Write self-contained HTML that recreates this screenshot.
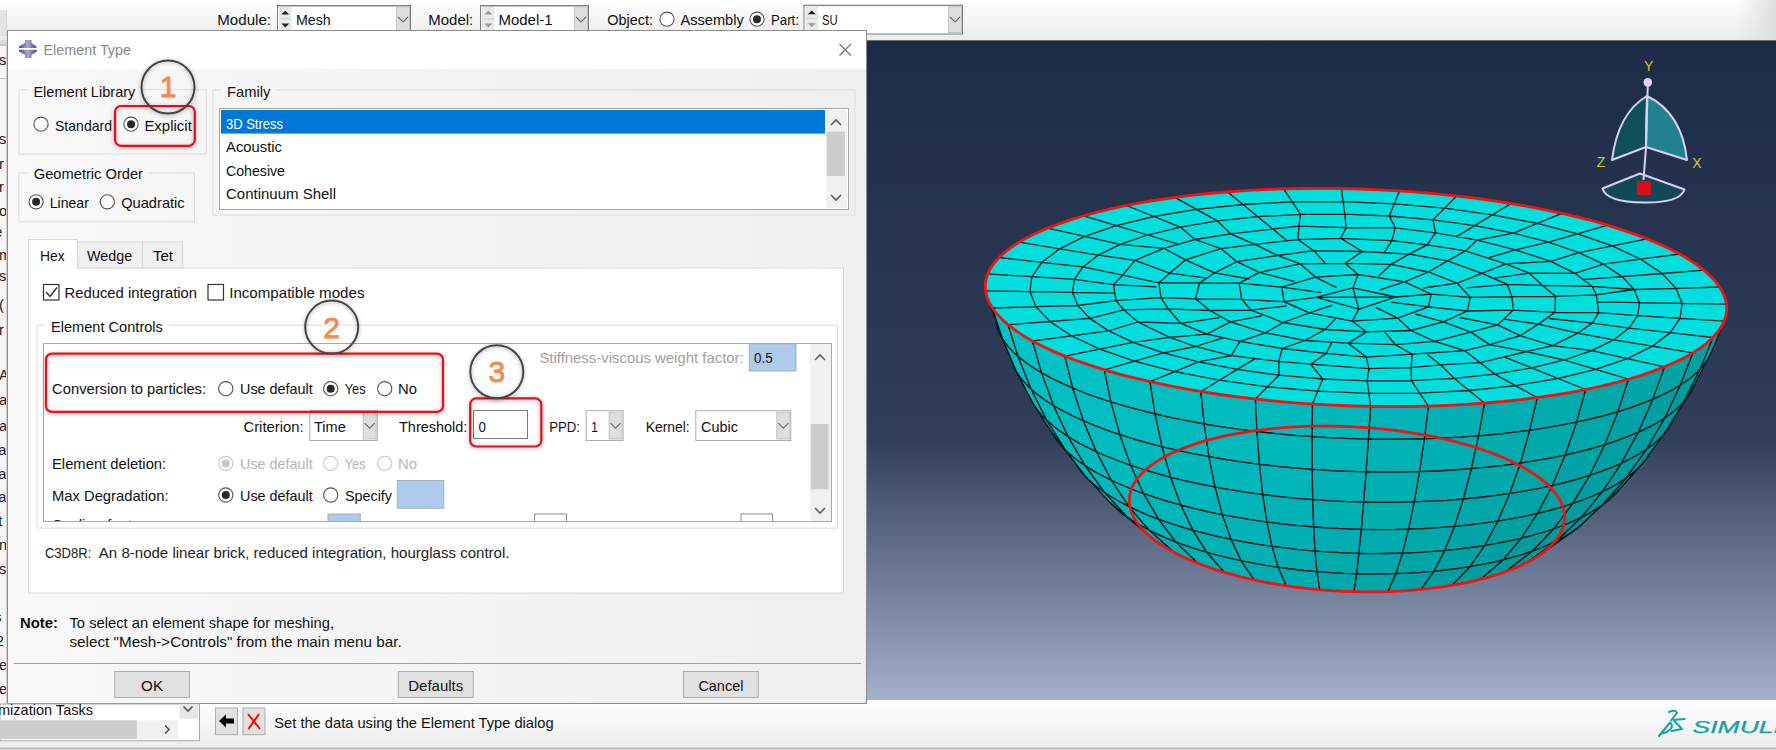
<!DOCTYPE html><html><head><meta charset="utf-8"><style>html,body{margin:0;padding:0;overflow:hidden;background:#f0f0f0}svg{display:block}text{font-family:"Liberation Sans",sans-serif}</style></head><body>
<svg width="1776" height="750" viewBox="0 0 1776 750">
<defs>
<linearGradient id="vp" x1="0" y1="0" x2="0" y2="1">
<stop offset="0" stop-color="#1d2c46"/><stop offset="0.6" stop-color="#303e59"/><stop offset="1" stop-color="#a4b0c9"/></linearGradient>
<linearGradient id="tb" x1="0" y1="0" x2="0" y2="1"><stop offset="0" stop-color="#ffffff"/><stop offset="1" stop-color="#ebebeb"/></linearGradient>
<linearGradient id="sb" x1="0" y1="0" x2="0" y2="1"><stop offset="0" stop-color="#ffffff"/><stop offset="1" stop-color="#ececec"/></linearGradient>
<linearGradient id="dlg" x1="0" y1="0" x2="1" y2="0"><stop offset="0" stop-color="#f8f8f8"/><stop offset="1" stop-color="#efefef"/></linearGradient>
<filter id="sh" x="-20%" y="-20%" width="140%" height="140%"><feGaussianBlur in="SourceAlpha" stdDeviation="2"/><feOffset dx="0" dy="1"/><feComponentTransfer><feFuncA type="linear" slope="0.35"/></feComponentTransfer><feMerge><feMergeNode/><feMergeNode in="SourceGraphic"/></feMerge></filter>
</defs>
<rect x="0" y="0" width="1776" height="40" fill="url(#tb)" stroke="none" stroke-width="1" rx="0" />
<linearGradient id="tbr" x1="0" y1="0" x2="1" y2="0"><stop offset="0" stop-color="#e4e4e4" stop-opacity="0"/><stop offset="1" stop-color="#dcdcdc"/></linearGradient>
<rect x="1735" y="0" width="41" height="40" fill="url(#tbr)" stroke="none" stroke-width="1" rx="0" />
<rect x="0" y="10" width="6.5" height="26" fill="#e4e4e4" stroke="none" stroke-width="1" rx="0" />
<line x1="6.5" y1="10" x2="6.5" y2="36" stroke="#d4d4d4" stroke-width="1"/>
<rect x="0" y="40" width="1776" height="660" fill="url(#vp)" stroke="none" stroke-width="1" rx="0" />
<line x1="0" y1="40.5" x2="1776" y2="40.5" stroke="#6a6a6a" stroke-width="1"/>
<rect x="0" y="700" width="1776" height="50" fill="url(#sb)" stroke="none" stroke-width="1" rx="0" />
<line x1="0" y1="748.5" x2="1776" y2="748.5" stroke="#b8b8b8" stroke-width="2"/>
<text x="217.3" y="25.4" font-size="15.0" fill="#111" font-weight="normal" textLength="53.7" lengthAdjust="spacingAndGlyphs" >Module:</text>
<rect x="277.5" y="5.5" width="133" height="34" fill="#fff" stroke="#7a7a7a" stroke-width="1" rx="0" />
<line x1="277" y1="6" x2="411" y2="6" stroke="#8a8a8a" stroke-width="1"/>
<rect x="396.5" y="7" width="13" height="31" fill="#dedede" stroke="#c4c4c4" stroke-width="1" rx="0" />
<path d="M398.0,17.0 L403.0,22.0 L408.0,17.0" fill="none" stroke="#6a6a6a" stroke-width="1.2"/>
<rect x="279" y="7" width="12.5" height="32" fill="#e9e9e9" stroke="none" stroke-width="1" rx="0" />
<path d="M281.3,14.6 L285.3,10.8 L289.3,14.6 Z" fill="#222"/>
<path d="M281.3,23.6 L285.3,27.4 L289.3,23.6 Z" fill="#222"/>
<line x1="280" y1="18.8" x2="291" y2="18.8" stroke="#cfcfcf" stroke-width="1"/>
<text x="296" y="25.4" font-size="15.0" fill="#111" font-weight="normal" textLength="34.7" lengthAdjust="spacingAndGlyphs" >Mesh</text>
<text x="428.3" y="25.4" font-size="15.0" fill="#111" font-weight="normal" textLength="44.9" lengthAdjust="spacingAndGlyphs" >Model:</text>
<rect x="480.5" y="5.5" width="108" height="34" fill="#fff" stroke="#7a7a7a" stroke-width="1" rx="0" />
<line x1="480" y1="6" x2="589" y2="6" stroke="#8a8a8a" stroke-width="1"/>
<rect x="574.5" y="7" width="13" height="31" fill="#dedede" stroke="#c4c4c4" stroke-width="1" rx="0" />
<path d="M576.0,17.0 L581.0,22.0 L586.0,17.0" fill="none" stroke="#6a6a6a" stroke-width="1.2"/>
<rect x="482" y="7" width="12.5" height="32" fill="#e9e9e9" stroke="none" stroke-width="1" rx="0" />
<path d="M484.3,14.6 L488.3,10.8 L492.3,14.6 Z" fill="#999"/>
<path d="M484.3,23.6 L488.3,27.4 L492.3,23.6 Z" fill="#999"/>
<line x1="483" y1="18.8" x2="494" y2="18.8" stroke="#cfcfcf" stroke-width="1"/>
<text x="498.6" y="25.4" font-size="15.0" fill="#111" font-weight="normal" textLength="53.9" lengthAdjust="spacingAndGlyphs" >Model-1</text>
<text x="607.2" y="25.4" font-size="15.0" fill="#111" font-weight="normal" textLength="45.8" lengthAdjust="spacingAndGlyphs" >Object:</text>
<circle cx="667" cy="19.2" r="7.1" fill="#fff" stroke="#555" stroke-width="1.1"/>
<text x="680.5" y="25.4" font-size="15.0" fill="#111" font-weight="normal" textLength="63.2" lengthAdjust="spacingAndGlyphs" >Assembly</text>
<circle cx="757" cy="19.2" r="7.1" fill="#fff" stroke="#555" stroke-width="1.1"/>
<circle cx="757" cy="19.2" r="4.0" fill="#2a2a2a"/>
<text x="771" y="25.4" font-size="15.0" fill="#111" font-weight="normal" textLength="27.9" lengthAdjust="spacingAndGlyphs" >Part:</text>
<rect x="804.0" y="5.2" width="158.5" height="28.8" fill="#fff" stroke="#7a7a7a" stroke-width="1" rx="0" />
<line x1="803.5" y1="5.7" x2="963" y2="5.7" stroke="#8a8a8a" stroke-width="1"/>
<rect x="948.5" y="6.7" width="13" height="25.8" fill="#dedede" stroke="#c4c4c4" stroke-width="1" rx="0" />
<path d="M950.0,17.0 L955.0,22.0 L960.0,17.0" fill="none" stroke="#6a6a6a" stroke-width="1.2"/>
<rect x="805.5" y="6.7" width="12.5" height="26.8" fill="#e9e9e9" stroke="none" stroke-width="1" rx="0" />
<path d="M807.8,14.3 L811.8,10.5 L815.8,14.3 Z" fill="#222"/>
<path d="M807.8,23.3 L811.8,27.099999999999998 L815.8,23.3 Z" fill="#999"/>
<line x1="806.5" y1="18.5" x2="817.5" y2="18.5" stroke="#cfcfcf" stroke-width="1"/>
<text x="822" y="25.4" font-size="15.0" fill="#111" font-weight="normal" textLength="15.7" lengthAdjust="spacingAndGlyphs" >SU</text>
<path d="M985.5,290.8 L985.2,285.1 L986.0,279.5 L987.7,273.9 L998.5,305.1 L996.8,310.8 L996.0,316.5 L996.3,322.2 Z" fill="rgb(0,191,193)" stroke="#021c1e" stroke-width="1.3" stroke-linejoin="round"/>
<path d="M996.3,322.2 L996.0,316.5 L996.8,310.8 L998.5,305.1 L1012.7,338.0 L1011.0,343.6 L1010.3,349.3 L1010.5,355.0 Z" fill="rgb(0,188,191)" stroke="#021c1e" stroke-width="1.3" stroke-linejoin="round"/>
<path d="M1010.5,355.0 L1010.3,349.3 L1011.0,343.6 L1012.7,338.0 L1029.7,370.0 L1028.1,375.6 L1027.3,381.2 L1027.5,386.9 Z" fill="rgb(0,186,188)" stroke="#021c1e" stroke-width="1.3" stroke-linejoin="round"/>
<path d="M1027.5,386.9 L1027.3,381.2 L1028.1,375.6 L1029.7,370.0 L1049.5,401.2 L1047.9,406.6 L1047.3,412.0 L1047.4,417.5 Z" fill="rgb(0,183,186)" stroke="#021c1e" stroke-width="1.3" stroke-linejoin="round"/>
<path d="M1047.4,417.5 L1047.3,412.0 L1047.9,406.6 L1049.5,401.2 L1072.2,431.2 L1070.8,436.4 L1070.1,441.5 L1070.2,446.8 Z" fill="rgb(0,181,183)" stroke="#021c1e" stroke-width="1.3" stroke-linejoin="round"/>
<path d="M1070.2,446.8 L1070.1,441.5 L1070.8,436.4 L1072.2,431.2 L1098.2,460.1 L1096.9,464.9 L1096.3,469.7 L1096.4,474.6 Z" fill="rgb(0,179,181)" stroke="#021c1e" stroke-width="1.3" stroke-linejoin="round"/>
<path d="M1096.4,474.6 L1096.3,469.7 L1096.9,464.9 L1098.2,460.1 L1130.9,490.3 L1129.8,494.5 L1129.3,498.8 L1129.3,503.1 Z" fill="rgb(0,177,179)" stroke="#021c1e" stroke-width="1.3" stroke-linejoin="round"/>
<path d="M1726.5,304.2 L1726.8,309.9 L1726.0,315.5 L1724.3,321.1 L1710.8,353.2 L1712.5,347.5 L1713.3,341.8 L1713.0,336.1 Z" fill="rgb(0,156,158)" stroke="#021c1e" stroke-width="1.3" stroke-linejoin="round"/>
<path d="M1713.0,336.1 L1713.3,341.8 L1712.5,347.5 L1710.8,353.2 L1693.8,386.3 L1695.5,380.7 L1696.2,375.0 L1696.0,369.2 Z" fill="rgb(0,153,155)" stroke="#021c1e" stroke-width="1.3" stroke-linejoin="round"/>
<path d="M1696.0,369.2 L1696.2,375.0 L1695.5,380.7 L1693.8,386.3 L1674.1,418.0 L1675.7,412.4 L1676.5,406.8 L1676.3,401.2 Z" fill="rgb(0,151,153)" stroke="#021c1e" stroke-width="1.3" stroke-linejoin="round"/>
<path d="M1676.3,401.2 L1676.5,406.8 L1675.7,412.4 L1674.1,418.0 L1651.7,448.0 L1653.2,442.6 L1653.9,437.2 L1653.8,431.7 Z" fill="rgb(0,149,150)" stroke="#021c1e" stroke-width="1.3" stroke-linejoin="round"/>
<path d="M1653.8,431.7 L1653.9,437.2 L1653.2,442.6 L1651.7,448.0 L1626.5,476.0 L1627.9,470.9 L1628.6,465.7 L1628.5,460.5 Z" fill="rgb(0,146,148)" stroke="#021c1e" stroke-width="1.3" stroke-linejoin="round"/>
<path d="M1628.5,460.5 L1628.6,465.7 L1627.9,470.9 L1626.5,476.0 L1598.2,501.9 L1599.5,497.2 L1600.1,492.4 L1600.0,487.5 Z" fill="rgb(0,144,146)" stroke="#021c1e" stroke-width="1.3" stroke-linejoin="round"/>
<path d="M1600.0,487.5 L1600.1,492.4 L1599.5,497.2 L1598.2,501.9 L1563.1,527.7 L1564.2,523.5 L1564.7,519.2 L1564.7,514.9 Z" fill="rgb(0,142,144)" stroke="#021c1e" stroke-width="1.3" stroke-linejoin="round"/>
<path d="M992.3,308.0 L989.0,302.3 L986.7,296.5 L985.5,290.8 L996.3,322.2 L997.5,328.0 L999.7,333.8 L1002.8,339.5 Z" fill="rgb(0,192,194)" stroke="#021c1e" stroke-width="1.3" stroke-linejoin="round"/>
<path d="M1002.8,339.5 L999.7,333.8 L997.5,328.0 L996.3,322.2 L1010.5,355.0 L1011.6,360.8 L1013.7,366.6 L1016.7,372.3 Z" fill="rgb(0,190,192)" stroke="#021c1e" stroke-width="1.3" stroke-linejoin="round"/>
<path d="M1016.7,372.3 L1013.7,366.6 L1011.6,360.8 L1010.5,355.0 L1027.5,386.9 L1028.6,392.5 L1030.5,398.2 L1033.3,403.9 Z" fill="rgb(0,187,189)" stroke="#021c1e" stroke-width="1.3" stroke-linejoin="round"/>
<path d="M1033.3,403.9 L1030.5,398.2 L1028.6,392.5 L1027.5,386.9 L1047.4,417.5 L1048.4,423.0 L1050.2,428.5 L1052.8,434.0 Z" fill="rgb(0,185,187)" stroke="#021c1e" stroke-width="1.3" stroke-linejoin="round"/>
<path d="M1052.8,434.0 L1050.2,428.5 L1048.4,423.0 L1047.4,417.5 L1070.2,446.8 L1071.1,452.0 L1072.7,457.2 L1075.1,462.4 Z" fill="rgb(0,182,185)" stroke="#021c1e" stroke-width="1.3" stroke-linejoin="round"/>
<path d="M1075.1,462.4 L1072.7,457.2 L1071.1,452.0 L1070.2,446.8 L1096.4,474.6 L1097.2,479.4 L1098.6,484.3 L1100.8,489.2 Z" fill="rgb(0,180,182)" stroke="#021c1e" stroke-width="1.3" stroke-linejoin="round"/>
<path d="M1100.8,489.2 L1098.6,484.3 L1097.2,479.4 L1096.4,474.6 L1129.3,503.1 L1130.0,507.5 L1131.3,511.8 L1133.1,516.2 Z" fill="rgb(0,178,180)" stroke="#021c1e" stroke-width="1.3" stroke-linejoin="round"/>
<path d="M1724.3,321.1 L1721.5,326.7 L1717.7,332.1 L1712.9,337.5 L1699.8,369.7 L1704.4,364.3 L1708.1,358.8 L1710.8,353.2 Z" fill="rgb(0,158,160)" stroke="#021c1e" stroke-width="1.3" stroke-linejoin="round"/>
<path d="M1710.8,353.2 L1708.1,358.8 L1704.4,364.3 L1699.8,369.7 L1683.2,402.8 L1687.6,397.4 L1691.2,391.9 L1693.8,386.3 Z" fill="rgb(0,155,157)" stroke="#021c1e" stroke-width="1.3" stroke-linejoin="round"/>
<path d="M1693.8,386.3 L1691.2,391.9 L1687.6,397.4 L1683.2,402.8 L1664.0,434.2 L1668.3,428.9 L1671.6,423.5 L1674.1,418.0 Z" fill="rgb(0,153,155)" stroke="#021c1e" stroke-width="1.3" stroke-linejoin="round"/>
<path d="M1674.1,418.0 L1671.6,423.5 L1668.3,428.9 L1664.0,434.2 L1642.2,463.7 L1646.2,458.6 L1649.4,453.3 L1651.7,448.0 Z" fill="rgb(0,150,152)" stroke="#021c1e" stroke-width="1.3" stroke-linejoin="round"/>
<path d="M1651.7,448.0 L1649.4,453.3 L1646.2,458.6 L1642.2,463.7 L1617.8,491.0 L1621.4,486.0 L1624.4,481.1 L1626.5,476.0 Z" fill="rgb(0,148,150)" stroke="#021c1e" stroke-width="1.3" stroke-linejoin="round"/>
<path d="M1626.5,476.0 L1624.4,481.1 L1621.4,486.0 L1617.8,491.0 L1590.2,515.9 L1593.6,511.3 L1596.2,506.7 L1598.2,501.9 Z" fill="rgb(0,146,148)" stroke="#021c1e" stroke-width="1.3" stroke-linejoin="round"/>
<path d="M1598.2,501.9 L1596.2,506.7 L1593.6,511.3 L1590.2,515.9 L1556.1,540.1 L1559.0,536.1 L1561.3,531.9 L1563.1,527.7 Z" fill="rgb(0,144,145)" stroke="#021c1e" stroke-width="1.3" stroke-linejoin="round"/>
<path d="M1008.1,324.8 L1001.9,319.3 L996.6,313.6 L992.3,308.0 L1002.8,339.5 L1007.0,345.2 L1012.0,350.9 L1018.1,356.5 Z" fill="rgb(0,193,195)" stroke="#021c1e" stroke-width="1.3" stroke-linejoin="round"/>
<path d="M1018.1,356.5 L1012.0,350.9 L1007.0,345.2 L1002.8,339.5 L1016.7,372.3 L1020.6,378.0 L1025.5,383.7 L1031.2,389.3 Z" fill="rgb(0,190,193)" stroke="#021c1e" stroke-width="1.3" stroke-linejoin="round"/>
<path d="M1031.2,389.3 L1025.5,383.7 L1020.6,378.0 L1016.7,372.3 L1033.3,403.9 L1037.0,409.5 L1041.6,415.1 L1047.0,420.6 Z" fill="rgb(0,188,190)" stroke="#021c1e" stroke-width="1.3" stroke-linejoin="round"/>
<path d="M1047.0,420.6 L1041.6,415.1 L1037.0,409.5 L1033.3,403.9 L1052.8,434.0 L1056.2,439.5 L1060.5,444.9 L1065.5,450.2 Z" fill="rgb(0,185,188)" stroke="#021c1e" stroke-width="1.3" stroke-linejoin="round"/>
<path d="M1065.5,450.2 L1060.5,444.9 L1056.2,439.5 L1052.8,434.0 L1075.1,462.4 L1078.3,467.6 L1082.2,472.8 L1086.8,477.9 Z" fill="rgb(0,183,185)" stroke="#021c1e" stroke-width="1.3" stroke-linejoin="round"/>
<path d="M1086.8,477.9 L1082.2,472.8 L1078.3,467.6 L1075.1,462.4 L1100.8,489.2 L1103.6,494.0 L1107.1,498.8 L1111.3,503.6 Z" fill="rgb(0,181,183)" stroke="#021c1e" stroke-width="1.3" stroke-linejoin="round"/>
<path d="M1111.3,503.6 L1107.1,498.8 L1103.6,494.0 L1100.8,489.2 L1133.1,516.2 L1135.5,520.5 L1138.5,524.7 L1142.1,529.0 Z" fill="rgb(0,179,181)" stroke="#021c1e" stroke-width="1.3" stroke-linejoin="round"/>
<path d="M1712.9,337.5 L1707.2,342.8 L1700.4,347.9 L1692.8,352.9 L1680.2,385.2 L1687.7,380.2 L1694.2,375.0 L1699.8,369.7 Z" fill="rgb(0,160,162)" stroke="#021c1e" stroke-width="1.3" stroke-linejoin="round"/>
<path d="M1699.8,369.7 L1694.2,375.0 L1687.7,380.2 L1680.2,385.2 L1664.5,418.3 L1671.6,413.3 L1677.8,408.1 L1683.2,402.8 Z" fill="rgb(0,157,159)" stroke="#021c1e" stroke-width="1.3" stroke-linejoin="round"/>
<path d="M1683.2,402.8 L1677.8,408.1 L1671.6,413.3 L1664.5,418.3 L1646.3,449.5 L1653.0,444.5 L1658.9,439.4 L1664.0,434.2 Z" fill="rgb(0,155,157)" stroke="#021c1e" stroke-width="1.3" stroke-linejoin="round"/>
<path d="M1664.0,434.2 L1658.9,439.4 L1653.0,444.5 L1646.3,449.5 L1625.6,478.5 L1631.9,473.7 L1637.5,468.8 L1642.2,463.7 Z" fill="rgb(0,152,154)" stroke="#021c1e" stroke-width="1.3" stroke-linejoin="round"/>
<path d="M1642.2,463.7 L1637.5,468.8 L1631.9,473.7 L1625.6,478.5 L1602.4,505.0 L1608.2,500.4 L1613.3,495.8 L1617.8,491.0 Z" fill="rgb(0,150,152)" stroke="#021c1e" stroke-width="1.3" stroke-linejoin="round"/>
<path d="M1617.8,491.0 L1613.3,495.8 L1608.2,500.4 L1602.4,505.0 L1576.3,528.9 L1581.6,524.7 L1586.2,520.3 L1590.2,515.9 Z" fill="rgb(0,148,150)" stroke="#021c1e" stroke-width="1.3" stroke-linejoin="round"/>
<path d="M1590.2,515.9 L1586.2,520.3 L1581.6,524.7 L1576.3,528.9 L1544.1,551.8 L1548.6,548.0 L1552.7,544.1 L1556.1,540.1 Z" fill="rgb(0,146,148)" stroke="#021c1e" stroke-width="1.3" stroke-linejoin="round"/>
<path d="M1032.5,341.0 L1023.4,335.7 L1015.3,330.3 L1008.1,324.8 L1018.1,356.5 L1025.0,362.1 L1032.9,367.5 L1041.6,372.9 Z" fill="rgb(0,193,196)" stroke="#021c1e" stroke-width="1.3" stroke-linejoin="round"/>
<path d="M1041.6,372.9 L1032.9,367.5 L1025.0,362.1 L1018.1,356.5 L1031.2,389.3 L1037.8,394.9 L1045.3,400.3 L1053.7,405.7 Z" fill="rgb(0,191,193)" stroke="#021c1e" stroke-width="1.3" stroke-linejoin="round"/>
<path d="M1053.7,405.7 L1045.3,400.3 L1037.8,394.9 L1031.2,389.3 L1047.0,420.6 L1053.3,426.1 L1060.3,431.4 L1068.2,436.7 Z" fill="rgb(0,188,191)" stroke="#021c1e" stroke-width="1.3" stroke-linejoin="round"/>
<path d="M1068.2,436.7 L1060.3,431.4 L1053.3,426.1 L1047.0,420.6 L1065.5,450.2 L1071.3,455.5 L1077.9,460.8 L1085.3,465.9 Z" fill="rgb(0,186,188)" stroke="#021c1e" stroke-width="1.3" stroke-linejoin="round"/>
<path d="M1085.3,465.9 L1077.9,460.8 L1071.3,455.5 L1065.5,450.2 L1086.8,477.9 L1092.2,483.0 L1098.2,487.9 L1105.0,492.8 Z" fill="rgb(0,184,186)" stroke="#021c1e" stroke-width="1.3" stroke-linejoin="round"/>
<path d="M1105.0,492.8 L1098.2,487.9 L1092.2,483.0 L1086.8,477.9 L1111.3,503.6 L1116.1,508.2 L1121.5,512.9 L1127.6,517.4 Z" fill="rgb(0,181,184)" stroke="#021c1e" stroke-width="1.3" stroke-linejoin="round"/>
<path d="M1127.6,517.4 L1121.5,512.9 L1116.1,508.2 L1111.3,503.6 L1142.1,529.0 L1146.3,533.2 L1151.0,537.3 L1156.2,541.3 Z" fill="rgb(0,179,181)" stroke="#021c1e" stroke-width="1.3" stroke-linejoin="round"/>
<path d="M1692.8,352.9 L1684.2,357.7 L1674.7,362.4 L1664.4,366.9 L1652.7,399.4 L1662.7,394.8 L1671.9,390.1 L1680.2,385.2 Z" fill="rgb(0,162,164)" stroke="#021c1e" stroke-width="1.3" stroke-linejoin="round"/>
<path d="M1680.2,385.2 L1671.9,390.1 L1662.7,394.8 L1652.7,399.4 L1638.1,432.4 L1647.7,427.9 L1656.5,423.2 L1664.5,418.3 Z" fill="rgb(0,160,162)" stroke="#021c1e" stroke-width="1.3" stroke-linejoin="round"/>
<path d="M1664.5,418.3 L1656.5,423.2 L1647.7,427.9 L1638.1,432.4 L1621.2,463.3 L1630.3,458.9 L1638.7,454.3 L1646.3,449.5 Z" fill="rgb(0,157,159)" stroke="#021c1e" stroke-width="1.3" stroke-linejoin="round"/>
<path d="M1646.3,449.5 L1638.7,454.3 L1630.3,458.9 L1621.2,463.3 L1602.1,491.9 L1610.7,487.6 L1618.5,483.1 L1625.6,478.5 Z" fill="rgb(0,155,157)" stroke="#021c1e" stroke-width="1.3" stroke-linejoin="round"/>
<path d="M1625.6,478.5 L1618.5,483.1 L1610.7,487.6 L1602.1,491.9 L1580.7,517.8 L1588.6,513.7 L1595.8,509.4 L1602.4,505.0 Z" fill="rgb(0,153,155)" stroke="#021c1e" stroke-width="1.3" stroke-linejoin="round"/>
<path d="M1602.4,505.0 L1595.8,509.4 L1588.6,513.7 L1580.7,517.8 L1556.8,540.8 L1563.9,537.0 L1570.4,533.0 L1576.3,528.9 Z" fill="rgb(0,150,152)" stroke="#021c1e" stroke-width="1.3" stroke-linejoin="round"/>
<path d="M1576.3,528.9 L1570.4,533.0 L1563.9,537.0 L1556.8,540.8 L1527.1,562.3 L1533.3,558.9 L1539.0,555.4 L1544.1,551.8 Z" fill="rgb(0,148,150)" stroke="#021c1e" stroke-width="1.3" stroke-linejoin="round"/>
<path d="M1064.8,356.1 L1053.2,351.2 L1042.4,346.2 L1032.5,341.0 L1041.6,372.9 L1051.2,378.1 L1061.6,383.2 L1072.8,388.2 Z" fill="rgb(0,193,196)" stroke="#021c1e" stroke-width="1.3" stroke-linejoin="round"/>
<path d="M1072.8,388.2 L1061.6,383.2 L1051.2,378.1 L1041.6,372.9 L1053.7,405.7 L1062.8,410.9 L1072.8,416.0 L1083.5,420.9 Z" fill="rgb(0,191,193)" stroke="#021c1e" stroke-width="1.3" stroke-linejoin="round"/>
<path d="M1083.5,420.9 L1072.8,416.0 L1062.8,410.9 L1053.7,405.7 L1068.2,436.7 L1076.8,441.9 L1086.2,446.9 L1096.4,451.8 Z" fill="rgb(0,188,191)" stroke="#021c1e" stroke-width="1.3" stroke-linejoin="round"/>
<path d="M1096.4,451.8 L1086.2,446.9 L1076.8,441.9 L1068.2,436.7 L1085.3,465.9 L1093.3,470.9 L1102.1,475.7 L1111.6,480.5 Z" fill="rgb(0,186,188)" stroke="#021c1e" stroke-width="1.3" stroke-linejoin="round"/>
<path d="M1111.6,480.5 L1102.1,475.7 L1093.3,470.9 L1085.3,465.9 L1105.0,492.8 L1112.4,497.5 L1120.4,502.2 L1129.1,506.7 Z" fill="rgb(0,183,186)" stroke="#021c1e" stroke-width="1.3" stroke-linejoin="round"/>
<path d="M1129.1,506.7 L1120.4,502.2 L1112.4,497.5 L1105.0,492.8 L1127.6,517.4 L1134.2,521.8 L1141.5,526.1 L1149.3,530.3 Z" fill="rgb(0,181,184)" stroke="#021c1e" stroke-width="1.3" stroke-linejoin="round"/>
<path d="M1149.3,530.3 L1141.5,526.1 L1134.2,521.8 L1127.6,517.4 L1156.2,541.3 L1162.0,545.3 L1168.2,549.1 L1175.0,552.9 Z" fill="rgb(0,179,181)" stroke="#021c1e" stroke-width="1.3" stroke-linejoin="round"/>
<path d="M1664.4,366.9 L1653.2,371.2 L1641.1,375.3 L1628.3,379.2 L1617.8,411.8 L1630.2,407.9 L1641.8,403.7 L1652.7,399.4 Z" fill="rgb(0,165,167)" stroke="#021c1e" stroke-width="1.3" stroke-linejoin="round"/>
<path d="M1652.7,399.4 L1641.8,403.7 L1630.2,407.9 L1617.8,411.8 L1604.7,444.8 L1616.5,440.9 L1627.7,436.7 L1638.1,432.4 Z" fill="rgb(0,163,165)" stroke="#021c1e" stroke-width="1.3" stroke-linejoin="round"/>
<path d="M1638.1,432.4 L1627.7,436.7 L1616.5,440.9 L1604.7,444.8 L1589.6,475.5 L1600.8,471.7 L1611.4,467.6 L1621.2,463.3 Z" fill="rgb(0,160,162)" stroke="#021c1e" stroke-width="1.3" stroke-linejoin="round"/>
<path d="M1621.2,463.3 L1611.4,467.6 L1600.8,471.7 L1589.6,475.5 L1572.5,503.7 L1583.0,500.0 L1592.9,496.0 L1602.1,491.9 Z" fill="rgb(0,158,160)" stroke="#021c1e" stroke-width="1.3" stroke-linejoin="round"/>
<path d="M1602.1,491.9 L1592.9,496.0 L1583.0,500.0 L1572.5,503.7 L1553.4,529.0 L1563.1,525.5 L1572.2,521.7 L1580.7,517.8 Z" fill="rgb(0,155,157)" stroke="#021c1e" stroke-width="1.3" stroke-linejoin="round"/>
<path d="M1580.7,517.8 L1572.2,521.7 L1563.1,525.5 L1553.4,529.0 L1532.1,551.2 L1540.9,547.9 L1549.1,544.5 L1556.8,540.8 Z" fill="rgb(0,153,155)" stroke="#021c1e" stroke-width="1.3" stroke-linejoin="round"/>
<path d="M1556.8,540.8 L1549.1,544.5 L1540.9,547.9 L1532.1,551.2 L1505.8,571.6 L1513.4,568.7 L1520.5,565.6 L1527.1,562.3 Z" fill="rgb(0,151,153)" stroke="#021c1e" stroke-width="1.3" stroke-linejoin="round"/>
<path d="M1104.3,369.8 L1090.4,365.4 L1077.2,360.9 L1064.8,356.1 L1072.8,388.2 L1084.8,393.0 L1097.5,397.6 L1111.0,402.0 Z" fill="rgb(0,193,195)" stroke="#021c1e" stroke-width="1.3" stroke-linejoin="round"/>
<path d="M1111.0,402.0 L1097.5,397.6 L1084.8,393.0 L1072.8,388.2 L1083.5,420.9 L1094.9,425.7 L1107.1,430.3 L1119.9,434.7 Z" fill="rgb(0,190,193)" stroke="#021c1e" stroke-width="1.3" stroke-linejoin="round"/>
<path d="M1119.9,434.7 L1107.1,430.3 L1094.9,425.7 L1083.5,420.9 L1096.4,451.8 L1107.2,456.5 L1118.7,461.0 L1130.8,465.4 Z" fill="rgb(0,188,190)" stroke="#021c1e" stroke-width="1.3" stroke-linejoin="round"/>
<path d="M1130.8,465.4 L1118.7,461.0 L1107.2,456.5 L1096.4,451.8 L1111.6,480.5 L1121.7,485.0 L1132.4,489.5 L1143.7,493.7 Z" fill="rgb(0,185,188)" stroke="#021c1e" stroke-width="1.3" stroke-linejoin="round"/>
<path d="M1143.7,493.7 L1132.4,489.5 L1121.7,485.0 L1111.6,480.5 L1129.1,506.7 L1138.4,511.1 L1148.3,515.3 L1158.7,519.3 Z" fill="rgb(0,183,185)" stroke="#021c1e" stroke-width="1.3" stroke-linejoin="round"/>
<path d="M1158.7,519.3 L1148.3,515.3 L1138.4,511.1 L1129.1,506.7 L1149.3,530.3 L1157.7,534.4 L1166.6,538.3 L1176.0,542.1 Z" fill="rgb(0,181,183)" stroke="#021c1e" stroke-width="1.3" stroke-linejoin="round"/>
<path d="M1176.0,542.1 L1166.6,538.3 L1157.7,534.4 L1149.3,530.3 L1175.0,552.9 L1182.2,556.5 L1189.9,560.0 L1198.0,563.3 Z" fill="rgb(0,178,181)" stroke="#021c1e" stroke-width="1.3" stroke-linejoin="round"/>
<path d="M1628.3,379.2 L1614.8,382.9 L1600.5,386.3 L1585.6,389.5 L1576.5,422.2 L1590.9,419.0 L1604.7,415.5 L1617.8,411.8 Z" fill="rgb(0,168,170)" stroke="#021c1e" stroke-width="1.3" stroke-linejoin="round"/>
<path d="M1617.8,411.8 L1604.7,415.5 L1590.9,419.0 L1576.5,422.2 L1565.1,455.1 L1578.9,451.9 L1592.1,448.5 L1604.7,444.8 Z" fill="rgb(0,166,168)" stroke="#021c1e" stroke-width="1.3" stroke-linejoin="round"/>
<path d="M1604.7,444.8 L1592.1,448.5 L1578.9,451.9 L1565.1,455.1 L1552.1,485.7 L1565.2,482.5 L1577.7,479.1 L1589.6,475.5 Z" fill="rgb(0,163,165)" stroke="#021c1e" stroke-width="1.3" stroke-linejoin="round"/>
<path d="M1589.6,475.5 L1577.7,479.1 L1565.2,482.5 L1552.1,485.7 L1537.4,513.5 L1549.7,510.5 L1561.4,507.2 L1572.5,503.7 Z" fill="rgb(0,161,163)" stroke="#021c1e" stroke-width="1.3" stroke-linejoin="round"/>
<path d="M1572.5,503.7 L1561.4,507.2 L1549.7,510.5 L1537.4,513.5 L1521.1,538.3 L1532.4,535.4 L1543.2,532.3 L1553.4,529.0 Z" fill="rgb(0,158,160)" stroke="#021c1e" stroke-width="1.3" stroke-linejoin="round"/>
<path d="M1553.4,529.0 L1543.2,532.3 L1532.4,535.4 L1521.1,538.3 L1502.9,559.9 L1513.1,557.2 L1522.8,554.3 L1532.1,551.2 Z" fill="rgb(0,156,158)" stroke="#021c1e" stroke-width="1.3" stroke-linejoin="round"/>
<path d="M1532.1,551.2 L1522.8,554.3 L1513.1,557.2 L1502.9,559.9 L1480.5,579.3 L1489.3,576.9 L1497.8,574.4 L1505.8,571.6 Z" fill="rgb(0,154,156)" stroke="#021c1e" stroke-width="1.3" stroke-linejoin="round"/>
<path d="M1150.0,381.7 L1134.2,378.0 L1118.9,374.0 L1104.3,369.8 L1111.0,402.0 L1125.1,406.2 L1139.8,410.2 L1155.1,414.0 Z" fill="rgb(0,192,194)" stroke="#021c1e" stroke-width="1.3" stroke-linejoin="round"/>
<path d="M1155.1,414.0 L1139.8,410.2 L1125.1,406.2 L1111.0,402.0 L1119.9,434.7 L1133.4,439.0 L1147.5,443.0 L1162.1,446.8 Z" fill="rgb(0,189,191)" stroke="#021c1e" stroke-width="1.3" stroke-linejoin="round"/>
<path d="M1162.1,446.8 L1147.5,443.0 L1133.4,439.0 L1119.9,434.7 L1130.8,465.4 L1143.6,469.6 L1156.9,473.5 L1170.7,477.3 Z" fill="rgb(0,187,189)" stroke="#021c1e" stroke-width="1.3" stroke-linejoin="round"/>
<path d="M1170.7,477.3 L1156.9,473.5 L1143.6,469.6 L1130.8,465.4 L1143.7,493.7 L1155.6,497.7 L1168.0,501.6 L1181.0,505.2 Z" fill="rgb(0,184,186)" stroke="#021c1e" stroke-width="1.3" stroke-linejoin="round"/>
<path d="M1181.0,505.2 L1168.0,501.6 L1155.6,497.7 L1143.7,493.7 L1158.7,519.3 L1169.6,523.2 L1181.1,526.8 L1193.0,530.3 Z" fill="rgb(0,182,184)" stroke="#021c1e" stroke-width="1.3" stroke-linejoin="round"/>
<path d="M1193.0,530.3 L1181.1,526.8 L1169.6,523.2 L1158.7,519.3 L1176.0,542.1 L1185.8,545.7 L1196.1,549.1 L1206.9,552.3 Z" fill="rgb(0,180,182)" stroke="#021c1e" stroke-width="1.3" stroke-linejoin="round"/>
<path d="M1206.9,552.3 L1196.1,549.1 L1185.8,545.7 L1176.0,542.1 L1198.0,563.3 L1206.5,566.5 L1215.4,569.6 L1224.6,572.5 Z" fill="rgb(0,177,180)" stroke="#021c1e" stroke-width="1.3" stroke-linejoin="round"/>
<path d="M1585.6,389.5 L1570.1,392.5 L1553.9,395.2 L1537.2,397.6 L1529.6,430.3 L1545.8,427.8 L1561.4,425.1 L1576.5,422.2 Z" fill="rgb(0,171,173)" stroke="#021c1e" stroke-width="1.3" stroke-linejoin="round"/>
<path d="M1576.5,422.2 L1561.4,425.1 L1545.8,427.8 L1529.6,430.3 L1520.3,463.2 L1535.7,460.7 L1550.7,458.1 L1565.1,455.1 Z" fill="rgb(0,169,171)" stroke="#021c1e" stroke-width="1.3" stroke-linejoin="round"/>
<path d="M1565.1,455.1 L1550.7,458.1 L1535.7,460.7 L1520.3,463.2 L1509.6,493.6 L1524.3,491.2 L1538.4,488.6 L1552.1,485.7 Z" fill="rgb(0,166,168)" stroke="#021c1e" stroke-width="1.3" stroke-linejoin="round"/>
<path d="M1552.1,485.7 L1538.4,488.6 L1524.3,491.2 L1509.6,493.6 L1497.7,521.2 L1511.4,518.9 L1524.6,516.3 L1537.4,513.5 Z" fill="rgb(0,164,166)" stroke="#021c1e" stroke-width="1.3" stroke-linejoin="round"/>
<path d="M1537.4,513.5 L1524.6,516.3 L1511.4,518.9 L1497.7,521.2 L1484.5,545.6 L1497.1,543.4 L1509.3,541.0 L1521.1,538.3 Z" fill="rgb(0,161,163)" stroke="#021c1e" stroke-width="1.3" stroke-linejoin="round"/>
<path d="M1521.1,538.3 L1509.3,541.0 L1497.1,543.4 L1484.5,545.6 L1469.9,566.7 L1481.3,564.6 L1492.3,562.4 L1502.9,559.9 Z" fill="rgb(0,159,161)" stroke="#021c1e" stroke-width="1.3" stroke-linejoin="round"/>
<path d="M1502.9,559.9 L1492.3,562.4 L1481.3,564.6 L1469.9,566.7 L1452.0,585.3 L1461.8,583.5 L1471.3,581.5 L1480.5,579.3 Z" fill="rgb(0,157,159)" stroke="#021c1e" stroke-width="1.3" stroke-linejoin="round"/>
<path d="M1200.8,391.5 L1183.4,388.5 L1166.4,385.2 L1150.0,381.7 L1155.1,414.0 L1171.0,417.6 L1187.4,420.9 L1204.2,424.0 Z" fill="rgb(0,190,192)" stroke="#021c1e" stroke-width="1.3" stroke-linejoin="round"/>
<path d="M1204.2,424.0 L1187.4,420.9 L1171.0,417.6 L1155.1,414.0 L1162.1,446.8 L1177.3,450.3 L1192.9,453.7 L1209.0,456.7 Z" fill="rgb(0,188,190)" stroke="#021c1e" stroke-width="1.3" stroke-linejoin="round"/>
<path d="M1209.0,456.7 L1192.9,453.7 L1177.3,450.3 L1162.1,446.8 L1170.7,477.3 L1185.1,480.8 L1199.9,484.0 L1215.1,487.1 Z" fill="rgb(0,185,187)" stroke="#021c1e" stroke-width="1.3" stroke-linejoin="round"/>
<path d="M1215.1,487.1 L1199.9,484.0 L1185.1,480.8 L1170.7,477.3 L1181.0,505.2 L1194.4,508.6 L1208.2,511.8 L1222.4,514.8 Z" fill="rgb(0,183,185)" stroke="#021c1e" stroke-width="1.3" stroke-linejoin="round"/>
<path d="M1222.4,514.8 L1208.2,511.8 L1194.4,508.6 L1181.0,505.2 L1193.0,530.3 L1205.3,533.5 L1218.0,536.6 L1231.1,539.4 Z" fill="rgb(0,180,183)" stroke="#021c1e" stroke-width="1.3" stroke-linejoin="round"/>
<path d="M1231.1,539.4 L1218.0,536.6 L1205.3,533.5 L1193.0,530.3 L1206.9,552.3 L1218.0,555.3 L1229.4,558.2 L1241.2,560.8 Z" fill="rgb(0,178,180)" stroke="#021c1e" stroke-width="1.3" stroke-linejoin="round"/>
<path d="M1241.2,560.8 L1229.4,558.2 L1218.0,555.3 L1206.9,552.3 L1224.6,572.5 L1234.2,575.2 L1244.1,577.7 L1254.3,580.0 Z" fill="rgb(0,176,178)" stroke="#021c1e" stroke-width="1.3" stroke-linejoin="round"/>
<path d="M1537.2,397.6 L1520.1,399.7 L1502.4,401.6 L1484.4,403.1 L1478.5,435.9 L1495.9,434.3 L1513.0,432.4 L1529.6,430.3 Z" fill="rgb(0,174,177)" stroke="#021c1e" stroke-width="1.3" stroke-linejoin="round"/>
<path d="M1529.6,430.3 L1513.0,432.4 L1495.9,434.3 L1478.5,435.9 L1471.3,468.7 L1488.0,467.2 L1504.3,465.3 L1520.3,463.2 Z" fill="rgb(0,172,174)" stroke="#021c1e" stroke-width="1.3" stroke-linejoin="round"/>
<path d="M1520.3,463.2 L1504.3,465.3 L1488.0,467.2 L1471.3,468.7 L1463.3,499.0 L1479.1,497.5 L1494.6,495.7 L1509.6,493.6 Z" fill="rgb(0,169,171)" stroke="#021c1e" stroke-width="1.3" stroke-linejoin="round"/>
<path d="M1509.6,493.6 L1494.6,495.7 L1479.1,497.5 L1463.3,499.0 L1454.4,526.4 L1469.2,525.0 L1483.6,523.2 L1497.7,521.2 Z" fill="rgb(0,167,169)" stroke="#021c1e" stroke-width="1.3" stroke-linejoin="round"/>
<path d="M1497.7,521.2 L1483.6,523.2 L1469.2,525.0 L1454.4,526.4 L1444.6,550.6 L1458.2,549.2 L1471.5,547.5 L1484.5,545.6 Z" fill="rgb(0,165,167)" stroke="#021c1e" stroke-width="1.3" stroke-linejoin="round"/>
<path d="M1484.5,545.6 L1471.5,547.5 L1458.2,549.2 L1444.6,550.6 L1433.9,571.3 L1446.2,570.0 L1458.2,568.5 L1469.9,566.7 Z" fill="rgb(0,162,164)" stroke="#021c1e" stroke-width="1.3" stroke-linejoin="round"/>
<path d="M1469.9,566.7 L1458.2,568.5 L1446.2,570.0 L1433.9,571.3 L1420.8,589.5 L1431.4,588.3 L1441.8,586.9 L1452.0,585.3 Z" fill="rgb(0,160,162)" stroke="#021c1e" stroke-width="1.3" stroke-linejoin="round"/>
<path d="M1255.4,399.0 L1236.9,396.8 L1218.6,394.3 L1200.8,391.5 L1204.2,424.0 L1221.5,426.8 L1239.1,429.3 L1257.0,431.6 Z" fill="rgb(0,188,191)" stroke="#021c1e" stroke-width="1.3" stroke-linejoin="round"/>
<path d="M1257.0,431.6 L1239.1,429.3 L1221.5,426.8 L1204.2,424.0 L1209.0,456.7 L1225.5,459.5 L1242.4,462.1 L1259.5,464.3 Z" fill="rgb(0,186,188)" stroke="#021c1e" stroke-width="1.3" stroke-linejoin="round"/>
<path d="M1259.5,464.3 L1242.4,462.1 L1225.5,459.5 L1209.0,456.7 L1215.1,487.1 L1230.7,489.8 L1246.6,492.4 L1262.8,494.6 Z" fill="rgb(0,183,185)" stroke="#021c1e" stroke-width="1.3" stroke-linejoin="round"/>
<path d="M1262.8,494.6 L1246.6,492.4 L1230.7,489.8 L1215.1,487.1 L1222.4,514.8 L1237.0,517.4 L1251.9,519.9 L1267.0,522.1 Z" fill="rgb(0,181,183)" stroke="#021c1e" stroke-width="1.3" stroke-linejoin="round"/>
<path d="M1267.0,522.1 L1251.9,519.9 L1237.0,517.4 L1222.4,514.8 L1231.1,539.4 L1244.5,542.0 L1258.2,544.3 L1272.1,546.4 Z" fill="rgb(0,178,181)" stroke="#021c1e" stroke-width="1.3" stroke-linejoin="round"/>
<path d="M1272.1,546.4 L1258.2,544.3 L1244.5,542.0 L1231.1,539.4 L1241.2,560.8 L1253.3,563.2 L1265.7,565.4 L1278.2,567.3 Z" fill="rgb(0,176,178)" stroke="#021c1e" stroke-width="1.3" stroke-linejoin="round"/>
<path d="M1278.2,567.3 L1265.7,565.4 L1253.3,563.2 L1241.2,560.8 L1254.3,580.0 L1264.8,582.2 L1275.4,584.1 L1286.3,585.8 Z" fill="rgb(0,174,176)" stroke="#021c1e" stroke-width="1.3" stroke-linejoin="round"/>
<path d="M1484.4,403.1 L1466.0,404.4 L1447.3,405.4 L1428.4,406.1 L1424.3,438.8 L1442.6,438.1 L1460.7,437.2 L1478.5,435.9 Z" fill="rgb(0,177,180)" stroke="#021c1e" stroke-width="1.3" stroke-linejoin="round"/>
<path d="M1478.5,435.9 L1460.7,437.2 L1442.6,438.1 L1424.3,438.8 L1419.5,471.7 L1437.0,471.0 L1454.3,470.0 L1471.3,468.7 Z" fill="rgb(0,175,177)" stroke="#021c1e" stroke-width="1.3" stroke-linejoin="round"/>
<path d="M1471.3,468.7 L1454.3,470.0 L1437.0,471.0 L1419.5,471.7 L1414.2,501.9 L1430.8,501.2 L1447.2,500.3 L1463.3,499.0 Z" fill="rgb(0,172,175)" stroke="#021c1e" stroke-width="1.3" stroke-linejoin="round"/>
<path d="M1463.3,499.0 L1447.2,500.3 L1430.8,501.2 L1414.2,501.9 L1408.5,529.2 L1424.0,528.6 L1439.3,527.6 L1454.4,526.4 Z" fill="rgb(0,170,172)" stroke="#021c1e" stroke-width="1.3" stroke-linejoin="round"/>
<path d="M1454.4,526.4 L1439.3,527.6 L1424.0,528.6 L1408.5,529.2 L1402.4,553.2 L1416.7,552.6 L1430.8,551.7 L1444.6,550.6 Z" fill="rgb(0,168,170)" stroke="#021c1e" stroke-width="1.3" stroke-linejoin="round"/>
<path d="M1444.6,550.6 L1430.8,551.7 L1416.7,552.6 L1402.4,553.2 L1395.8,573.7 L1408.6,573.2 L1421.4,572.4 L1433.9,571.3 Z" fill="rgb(0,165,168)" stroke="#021c1e" stroke-width="1.3" stroke-linejoin="round"/>
<path d="M1433.9,571.3 L1421.4,572.4 L1408.6,573.2 L1395.8,573.7 L1387.9,591.6 L1399.0,591.1 L1410.0,590.4 L1420.8,589.5 Z" fill="rgb(0,163,165)" stroke="#021c1e" stroke-width="1.3" stroke-linejoin="round"/>
<path d="M1312.5,404.0 L1293.3,402.7 L1274.2,401.0 L1255.4,399.0 L1257.0,431.6 L1275.2,433.6 L1293.6,435.3 L1312.2,436.7 Z" fill="rgb(0,186,188)" stroke="#021c1e" stroke-width="1.3" stroke-linejoin="round"/>
<path d="M1312.2,436.7 L1293.6,435.3 L1275.2,433.6 L1257.0,431.6 L1259.5,464.3 L1276.9,466.3 L1294.5,468.0 L1312.3,469.4 Z" fill="rgb(0,183,186)" stroke="#021c1e" stroke-width="1.3" stroke-linejoin="round"/>
<path d="M1312.3,469.4 L1294.5,468.0 L1276.9,466.3 L1259.5,464.3 L1262.8,494.6 L1279.3,496.6 L1295.9,498.3 L1312.7,499.6 Z" fill="rgb(0,181,183)" stroke="#021c1e" stroke-width="1.3" stroke-linejoin="round"/>
<path d="M1312.7,499.6 L1295.9,498.3 L1279.3,496.6 L1262.8,494.6 L1267.0,522.1 L1282.4,524.0 L1298.0,525.6 L1313.7,527.0 Z" fill="rgb(0,178,181)" stroke="#021c1e" stroke-width="1.3" stroke-linejoin="round"/>
<path d="M1313.7,527.0 L1298.0,525.6 L1282.4,524.0 L1267.0,522.1 L1272.1,546.4 L1286.3,548.2 L1300.6,549.8 L1315.1,551.1 Z" fill="rgb(0,176,178)" stroke="#021c1e" stroke-width="1.3" stroke-linejoin="round"/>
<path d="M1315.1,551.1 L1300.6,549.8 L1286.3,548.2 L1272.1,546.4 L1278.2,567.3 L1291.0,569.0 L1303.9,570.5 L1317.0,571.7 Z" fill="rgb(0,174,176)" stroke="#021c1e" stroke-width="1.3" stroke-linejoin="round"/>
<path d="M1317.0,571.7 L1303.9,570.5 L1291.0,569.0 L1278.2,567.3 L1286.3,585.8 L1297.3,587.4 L1308.5,588.7 L1319.8,589.8 Z" fill="rgb(0,172,174)" stroke="#021c1e" stroke-width="1.3" stroke-linejoin="round"/>
<path d="M1428.4,406.1 L1409.3,406.5 L1390.0,406.6 L1370.6,406.4 L1368.4,439.1 L1387.2,439.3 L1405.8,439.2 L1424.3,438.8 Z" fill="rgb(0,180,183)" stroke="#021c1e" stroke-width="1.3" stroke-linejoin="round"/>
<path d="M1424.3,438.8 L1405.8,439.2 L1387.2,439.3 L1368.4,439.1 L1366.0,471.9 L1384.0,472.1 L1401.8,472.0 L1419.5,471.7 Z" fill="rgb(0,178,180)" stroke="#021c1e" stroke-width="1.3" stroke-linejoin="round"/>
<path d="M1419.5,471.7 L1401.8,472.0 L1384.0,472.1 L1366.0,471.9 L1363.6,502.1 L1380.6,502.3 L1397.5,502.3 L1414.2,501.9 Z" fill="rgb(0,175,178)" stroke="#021c1e" stroke-width="1.3" stroke-linejoin="round"/>
<path d="M1414.2,501.9 L1397.5,502.3 L1380.6,502.3 L1363.6,502.1 L1361.2,529.4 L1377.1,529.6 L1392.9,529.6 L1408.5,529.2 Z" fill="rgb(0,173,175)" stroke="#021c1e" stroke-width="1.3" stroke-linejoin="round"/>
<path d="M1408.5,529.2 L1392.9,529.6 L1377.1,529.6 L1361.2,529.4 L1358.8,553.4 L1373.4,553.6 L1388.0,553.5 L1402.4,553.2 Z" fill="rgb(0,171,173)" stroke="#021c1e" stroke-width="1.3" stroke-linejoin="round"/>
<path d="M1402.4,553.2 L1388.0,553.5 L1373.4,553.6 L1358.8,553.4 L1356.5,573.8 L1369.6,574.1 L1382.7,574.0 L1395.8,573.7 Z" fill="rgb(0,168,171)" stroke="#021c1e" stroke-width="1.3" stroke-linejoin="round"/>
<path d="M1395.8,573.7 L1382.7,574.0 L1369.6,574.1 L1356.5,573.8 L1353.9,591.7 L1365.3,591.9 L1376.6,591.8 L1387.9,591.6 Z" fill="rgb(0,166,168)" stroke="#021c1e" stroke-width="1.3" stroke-linejoin="round"/>
<path d="M1370.6,406.4 L1351.2,405.9 L1331.8,405.1 L1312.5,404.0 L1312.2,436.7 L1330.9,437.8 L1349.7,438.6 L1368.4,439.1 Z" fill="rgb(0,183,186)" stroke="#021c1e" stroke-width="1.3" stroke-linejoin="round"/>
<path d="M1368.4,439.1 L1349.7,438.6 L1330.9,437.8 L1312.2,436.7 L1312.3,469.4 L1330.1,470.6 L1348.1,471.4 L1366.0,471.9 Z" fill="rgb(0,181,183)" stroke="#021c1e" stroke-width="1.3" stroke-linejoin="round"/>
<path d="M1366.0,471.9 L1348.1,471.4 L1330.1,470.6 L1312.3,469.4 L1312.7,499.6 L1329.7,500.8 L1346.6,501.6 L1363.6,502.1 Z" fill="rgb(0,178,181)" stroke="#021c1e" stroke-width="1.3" stroke-linejoin="round"/>
<path d="M1363.6,502.1 L1346.6,501.6 L1329.7,500.8 L1312.7,499.6 L1313.7,527.0 L1329.5,528.1 L1345.3,528.9 L1361.2,529.4 Z" fill="rgb(0,176,178)" stroke="#021c1e" stroke-width="1.3" stroke-linejoin="round"/>
<path d="M1361.2,529.4 L1345.3,528.9 L1329.5,528.1 L1313.7,527.0 L1315.1,551.1 L1329.6,552.1 L1344.2,552.9 L1358.8,553.4 Z" fill="rgb(0,173,176)" stroke="#021c1e" stroke-width="1.3" stroke-linejoin="round"/>
<path d="M1358.8,553.4 L1344.2,552.9 L1329.6,552.1 L1315.1,551.1 L1317.0,571.7 L1330.1,572.7 L1343.3,573.4 L1356.5,573.8 Z" fill="rgb(0,171,173)" stroke="#021c1e" stroke-width="1.3" stroke-linejoin="round"/>
<path d="M1356.5,573.8 L1343.3,573.4 L1330.1,572.7 L1317.0,571.7 L1319.8,589.8 L1331.1,590.6 L1342.5,591.3 L1353.9,591.7 Z" fill="rgb(0,169,171)" stroke="#021c1e" stroke-width="1.3" stroke-linejoin="round"/>
<path d="M1726.8,309.5 L1726.1,315.1 L1724.4,320.7 L1721.7,326.3 L1718.0,331.8 L1713.3,337.1 L1707.6,342.4 L1700.9,347.6 L1693.3,352.6 L1684.8,357.4 L1675.4,362.1 L1665.1,366.6 L1653.9,370.9 L1642.0,375.1 L1629.2,379.0 L1615.7,382.7 L1601.5,386.1 L1586.6,389.3 L1571.1,392.3 L1555.0,395.0 L1538.4,397.4 L1521.2,399.6 L1503.6,401.5 L1485.6,403.0 L1467.3,404.4 L1448.6,405.4 L1429.7,406.1 L1410.5,406.5 L1391.3,406.6 L1371.9,406.4 L1352.5,406.0 L1333.1,405.2 L1313.8,404.1 L1294.5,402.8 L1275.5,401.1 L1256.6,399.2 L1238.1,397.0 L1219.8,394.5 L1202.0,391.7 L1184.5,388.7 L1167.6,385.4 L1151.1,381.9 L1135.2,378.2 L1119.9,374.3 L1105.3,370.1 L1091.3,365.7 L1078.1,361.2 L1065.6,356.4 L1054.0,351.6 L1043.1,346.5 L1033.1,341.4 L1024.0,336.1 L1015.8,330.7 L1008.6,325.2 L1002.3,319.6 L996.9,314.0 L992.6,308.3 L989.2,302.6 L986.9,296.9 L985.5,291.2 L985.2,285.5 L985.9,279.9 L987.6,274.3 L990.3,268.7 L994.0,263.2 L998.7,257.9 L1004.4,252.6 L1011.1,247.4 L1018.7,242.4 L1027.2,237.6 L1036.6,232.9 L1046.9,228.4 L1058.1,224.1 L1070.0,219.9 L1082.8,216.0 L1096.3,212.3 L1110.5,208.9 L1125.4,205.7 L1140.9,202.7 L1157.0,200.0 L1173.6,197.6 L1190.8,195.4 L1208.4,193.5 L1226.4,192.0 L1244.7,190.6 L1263.4,189.6 L1282.3,188.9 L1301.5,188.5 L1320.7,188.4 L1340.1,188.6 L1359.5,189.0 L1378.9,189.8 L1398.2,190.9 L1417.5,192.2 L1436.5,193.9 L1455.4,195.8 L1473.9,198.0 L1492.2,200.5 L1510.0,203.3 L1527.5,206.3 L1544.4,209.6 L1560.9,213.1 L1576.8,216.8 L1592.1,220.7 L1606.7,224.9 L1620.7,229.3 L1633.9,233.8 L1646.4,238.6 L1658.0,243.4 L1668.9,248.5 L1678.9,253.6 L1688.0,258.9 L1696.2,264.3 L1703.4,269.8 L1709.7,275.4 L1715.1,281.0 L1719.4,286.7 L1722.8,292.4 L1725.1,298.1 L1726.5,303.8 Z" fill="#00dede"/>
<path d="M1368.9,393.3 L1317.7,391.2 L1267.5,386.8 L1219.4,380.2 L1174.7,371.6 L1134.5,361.1 L1099.8,349.1 L1071.3,335.8 L1049.9,321.5 L1036.0,306.7 L1029.9,291.6 L1031.9,276.7 L1041.9,262.3 L1059.6,248.8 L1084.6,236.4 L1116.3,225.6 L1153.9,216.5 L1196.5,209.4 L1243.0,204.5 L1292.3,201.9 L1343.1,201.7 L1394.3,203.8 L1444.5,208.2 L1492.6,214.8 L1537.3,223.4 L1577.5,233.9 L1612.2,245.9 L1640.7,259.2 L1662.1,273.5 L1676.0,288.3 L1682.1,303.4 L1680.1,318.3 L1670.1,332.7 L1652.4,346.2 L1627.4,358.6 L1595.7,369.4 L1558.1,378.5 L1515.5,385.6 L1469.0,390.5 L1419.7,393.1 Z M1367.2,380.8 L1322.7,379.0 L1279.0,375.2 L1237.3,369.4 L1198.4,361.9 L1163.5,352.8 L1133.2,342.4 L1108.5,330.8 L1089.9,318.4 L1077.8,305.5 L1072.5,292.4 L1074.3,279.4 L1083.0,266.9 L1098.4,255.1 L1120.1,244.4 L1147.7,235.0 L1180.3,227.1 L1217.3,220.9 L1257.8,216.7 L1300.6,214.4 L1344.8,214.2 L1389.3,216.0 L1433.0,219.8 L1474.7,225.6 L1513.6,233.1 L1548.5,242.2 L1578.8,252.6 L1603.5,264.2 L1622.1,276.6 L1634.2,289.5 L1639.5,302.6 L1637.7,315.6 L1629.0,328.1 L1613.6,339.9 L1591.9,350.6 L1564.3,360.0 L1531.7,367.9 L1494.7,374.1 L1454.2,378.3 L1411.4,380.6 Z M1368.9,368.7 L1310.6,364.2 L1278.7,361.4 L1231.2,355.7 L1195.3,346.5 L1169.7,337.3 L1138.0,322.0 L1123.9,309.9 L1116.0,300.7 L1113.5,284.6 L1122.6,275.2 L1135.1,260.4 L1163.8,248.3 L1195.1,239.5 L1230.7,233.8 L1272.8,229.0 L1298.9,226.2 L1346.2,227.6 L1395.3,227.8 L1435.6,232.9 L1477.2,240.1 L1515.4,249.8 L1550.9,261.4 L1574.9,273.3 L1592.2,286.3 L1596.3,294.8 L1598.7,312.6 L1592.2,323.2 L1577.8,333.1 L1552.6,345.6 L1526.3,351.7 L1480.3,362.7 L1440.6,364.9 L1411.1,367.6 Z M1366.3,357.1 L1326.1,353.4 L1282.2,348.5 L1240.0,341.3 L1206.8,334.1 L1180.9,323.4 L1168.1,308.8 L1161.0,297.7 L1158.9,282.8 L1169.6,273.2 L1185.5,259.9 L1220.9,248.6 L1254.9,244.3 L1298.0,239.6 L1340.8,238.3 L1391.8,240.6 L1427.1,244.8 L1465.4,250.9 L1505.8,263.8 L1529.4,273.2 L1542.5,285.4 L1555.5,296.4 L1554.9,312.4 L1538.4,324.1 L1520.2,335.7 L1489.7,344.6 L1464.8,350.7 L1412.3,354.2 Z M1348.2,343.2 L1304.9,340.5 L1265.4,332.8 L1230.3,321.9 L1209.9,310.5 L1195.4,298.8 L1199.6,282.9 L1214.6,272.8 L1236.9,261.7 L1277.7,255.5 L1313.9,250.7 L1362.3,251.5 L1409.2,254.1 L1447.6,260.9 L1481.9,273.3 L1507.3,284.3 L1511.9,296.6 L1513.4,310.1 L1497.6,324.8 L1470.7,332.1 L1434.7,341.3 L1395.3,344.7 Z M1366.5,331.9 L1325.2,329.5 L1283.2,322.5 L1251.1,310.1 L1241.7,299.3 L1239.2,283.1 L1259.3,272.4 L1300.2,263.9 L1345.1,263.3 L1391.1,264.4 L1428.4,272.0 L1457.3,283.2 L1470.2,297.3 L1467.4,311.0 L1443.4,321.8 L1410.8,330.5 Z M1352.3,321.2 L1309.3,312.8 L1284.2,301.7 L1281.7,287.2 L1315.5,277.1 L1358.1,274.5 L1404.6,281.9 L1431.2,294.1 L1428.4,306.9 L1397.7,318.1 Z M1358.8,309.2 L1316.3,297.3 L1352.9,287.9 L1395.9,297.0 Z M1368.9,393.3 L1370.6,406.4 M1317.7,391.2 L1312.5,404.0 M1267.5,386.8 L1255.4,399.0 M1219.4,380.2 L1200.8,391.5 M1174.7,371.6 L1150.0,381.7 M1134.5,361.1 L1104.3,369.8 M1099.8,349.1 L1064.8,356.1 M1071.3,335.8 L1032.5,341.0 M1049.9,321.5 L1008.1,324.8 M1036.0,306.7 L992.3,308.0 M1029.9,291.6 L985.5,290.8 M1031.9,276.7 L987.7,273.9 M1041.9,262.3 L999.1,257.5 M1059.6,248.8 L1019.2,242.1 M1084.6,236.4 L1047.6,228.1 M1116.3,225.6 L1083.7,215.8 M1153.9,216.5 L1126.4,205.5 M1196.5,209.4 L1174.8,197.4 M1243.0,204.5 L1227.6,191.9 M1292.3,201.9 L1283.6,188.9 M1343.1,201.7 L1341.4,188.6 M1394.3,203.8 L1399.5,191.0 M1444.5,208.2 L1456.6,196.0 M1492.6,214.8 L1511.2,203.5 M1537.3,223.4 L1562.0,213.3 M1577.5,233.9 L1607.7,225.2 M1612.2,245.9 L1647.2,238.9 M1640.7,259.2 L1679.5,254.0 M1662.1,273.5 L1703.9,270.2 M1676.0,288.3 L1719.7,287.0 M1682.1,303.4 L1726.5,304.2 M1680.1,318.3 L1724.3,321.1 M1670.1,332.7 L1712.9,337.5 M1652.4,346.2 L1692.8,352.9 M1627.4,358.6 L1664.4,366.9 M1595.7,369.4 L1628.3,379.2 M1558.1,378.5 L1585.6,389.5 M1515.5,385.6 L1537.2,397.6 M1469.0,390.5 L1484.4,403.1 M1419.7,393.1 L1428.4,406.1 M1367.2,380.8 L1368.9,393.3 M1322.7,379.0 L1317.7,391.2 M1279.0,375.2 L1267.5,386.8 M1237.3,369.4 L1219.4,380.2 M1198.4,361.9 L1174.7,371.6 M1163.5,352.8 L1134.5,361.1 M1133.2,342.4 L1099.8,349.1 M1108.5,330.8 L1071.3,335.8 M1089.9,318.4 L1049.9,321.5 M1077.8,305.5 L1036.0,306.7 M1072.5,292.4 L1029.9,291.6 M1074.3,279.4 L1031.9,276.7 M1083.0,266.9 L1041.9,262.3 M1098.4,255.1 L1059.6,248.8 M1120.1,244.4 L1084.6,236.4 M1147.7,235.0 L1116.3,225.6 M1180.3,227.1 L1153.9,216.5 M1217.3,220.9 L1196.5,209.4 M1257.8,216.7 L1243.0,204.5 M1300.6,214.4 L1292.3,201.9 M1344.8,214.2 L1343.1,201.7 M1389.3,216.0 L1394.3,203.8 M1433.0,219.8 L1444.5,208.2 M1474.7,225.6 L1492.6,214.8 M1513.6,233.1 L1537.3,223.4 M1548.5,242.2 L1577.5,233.9 M1578.8,252.6 L1612.2,245.9 M1603.5,264.2 L1640.7,259.2 M1622.1,276.6 L1662.1,273.5 M1634.2,289.5 L1676.0,288.3 M1639.5,302.6 L1682.1,303.4 M1637.7,315.6 L1680.1,318.3 M1629.0,328.1 L1670.1,332.7 M1613.6,339.9 L1652.4,346.2 M1591.9,350.6 L1627.4,358.6 M1564.3,360.0 L1595.7,369.4 M1531.7,367.9 L1558.1,378.5 M1494.7,374.1 L1515.5,385.6 M1454.2,378.3 L1469.0,390.5 M1411.4,380.6 L1419.7,393.1 M1368.9,368.7 L1367.2,380.8 M1310.6,364.2 L1322.7,379.0 M1278.7,361.4 L1279.0,375.2 M1231.2,355.7 L1198.4,361.9 M1195.3,346.5 L1163.5,352.8 M1169.7,337.3 L1133.2,342.4 M1138.0,322.0 L1108.5,330.8 M1123.9,309.9 L1089.9,318.4 M1116.0,300.7 L1077.8,305.5 M1113.5,284.6 L1074.3,279.4 M1122.6,275.2 L1083.0,266.9 M1135.1,260.4 L1098.4,255.1 M1163.8,248.3 L1120.1,244.4 M1195.1,239.5 L1180.3,227.1 M1230.7,233.8 L1217.3,220.9 M1272.8,229.0 L1257.8,216.7 M1298.9,226.2 L1300.6,214.4 M1346.2,227.6 L1344.8,214.2 M1395.3,227.8 L1389.3,216.0 M1435.6,232.9 L1433.0,219.8 M1477.2,240.1 L1513.6,233.1 M1515.4,249.8 L1548.5,242.2 M1550.9,261.4 L1578.8,252.6 M1574.9,273.3 L1603.5,264.2 M1592.2,286.3 L1634.2,289.5 M1596.3,294.8 L1634.2,289.5 M1598.7,312.6 L1637.7,315.6 M1592.2,323.2 L1629.0,328.1 M1577.8,333.1 L1613.6,339.9 M1552.6,345.6 L1591.9,350.6 M1526.3,351.7 L1564.3,360.0 M1480.3,362.7 L1494.7,374.1 M1440.6,364.9 L1454.2,378.3 M1411.1,367.6 L1411.4,380.6 M1237.3,369.4 L1255.1,358.6 M1072.5,292.4 L1115.2,293.2 M1147.7,235.0 L1179.0,244.4 M1474.7,225.6 L1456.9,236.4 M1622.1,276.6 L1582.1,279.7 M1639.5,302.6 L1596.8,301.8 M1531.7,367.9 L1505.3,357.3 M1366.3,357.1 L1368.9,368.7 M1326.1,353.4 L1310.6,364.2 M1282.2,348.5 L1278.7,361.4 M1240.0,341.3 L1231.2,355.7 M1206.8,334.1 L1169.7,337.3 M1180.9,323.4 L1138.0,322.0 M1168.1,308.8 L1123.9,309.9 M1161.0,297.7 L1116.0,300.7 M1158.9,282.8 L1122.6,275.2 M1169.6,273.2 L1135.1,260.4 M1185.5,259.9 L1163.8,248.3 M1220.9,248.6 L1195.1,239.5 M1254.9,244.3 L1230.7,233.8 M1298.0,239.6 L1298.9,226.2 M1340.8,238.3 L1346.2,227.6 M1391.8,240.6 L1395.3,227.8 M1427.1,244.8 L1435.6,232.9 M1465.4,250.9 L1477.2,240.1 M1505.8,263.8 L1550.9,261.4 M1529.4,273.2 L1574.9,273.3 M1542.5,285.4 L1592.2,286.3 M1555.5,296.4 L1596.3,294.8 M1554.9,312.4 L1598.7,312.6 M1538.4,324.1 L1577.8,333.1 M1520.2,335.7 L1552.6,345.6 M1489.7,344.6 L1526.3,351.7 M1464.8,350.7 L1480.3,362.7 M1412.3,354.2 L1411.1,367.6 M1195.3,346.5 L1224.2,337.7 M1113.5,284.6 L1156.4,286.9 M1272.8,229.0 L1286.7,240.4 M1515.4,249.8 L1489.1,257.6 M1592.2,323.2 L1549.3,318.5 M1440.6,364.9 L1427.3,354.4 M1348.2,343.2 L1366.3,357.1 M1304.9,340.5 L1282.2,348.5 M1265.4,332.8 L1240.0,341.3 M1230.3,321.9 L1206.8,334.1 M1209.9,310.5 L1168.1,308.8 M1195.4,298.8 L1161.0,297.7 M1199.6,282.9 L1158.9,282.8 M1214.6,272.8 L1185.5,259.9 M1236.9,261.7 L1220.9,248.6 M1277.7,255.5 L1254.9,244.3 M1313.9,250.7 L1298.0,239.6 M1362.3,251.5 L1340.8,238.3 M1409.2,254.1 L1427.1,244.8 M1447.6,260.9 L1465.4,250.9 M1481.9,273.3 L1505.8,263.8 M1507.3,284.3 L1542.5,285.4 M1511.9,296.6 L1555.5,296.4 M1513.4,310.1 L1554.9,312.4 M1497.6,324.8 L1520.2,335.7 M1470.7,332.1 L1489.7,344.6 M1434.7,341.3 L1464.8,350.7 M1395.3,344.7 L1412.3,354.2 M1326.1,353.4 L1331.7,342.9 M1180.9,323.4 L1219.6,317.7 M1169.6,273.2 L1205.2,277.9 M1391.8,240.6 L1384.4,252.4 M1529.4,273.2 L1493.9,278.2 M1538.4,324.1 L1504.2,319.1 M1366.5,331.9 L1348.2,343.2 M1325.2,329.5 L1304.9,340.5 M1283.2,322.5 L1265.4,332.8 M1251.1,310.1 L1209.9,310.5 M1241.7,299.3 L1195.4,298.8 M1239.2,283.1 L1199.6,282.9 M1259.3,272.4 L1236.9,261.7 M1300.2,263.9 L1277.7,255.5 M1345.1,263.3 L1362.3,251.5 M1391.1,264.4 L1409.2,254.1 M1428.4,272.0 L1447.6,260.9 M1457.3,283.2 L1481.9,273.3 M1470.2,297.3 L1511.9,296.6 M1467.4,311.0 L1513.4,310.1 M1443.4,321.8 L1470.7,332.1 M1410.8,330.5 L1434.7,341.3 M1230.3,321.9 L1261.8,315.8 M1214.6,272.8 L1249.6,279.0 M1313.9,250.7 L1325.0,263.0 M1507.3,284.3 L1466.2,287.9 M1497.6,324.8 L1459.6,317.5 M1395.3,344.7 L1384.8,332.1 M1352.3,321.2 L1366.5,331.9 M1309.3,312.8 L1283.2,322.5 M1284.2,301.7 L1241.7,299.3 M1281.7,287.2 L1239.2,283.1 M1315.5,277.1 L1300.2,263.9 M1358.1,274.5 L1345.1,263.3 M1404.6,281.9 L1428.4,272.0 M1431.2,294.1 L1470.2,297.3 M1428.4,306.9 L1467.4,311.0 M1397.7,318.1 L1410.8,330.5 M1325.2,329.5 L1335.5,318.9 M1251.1,310.1 L1286.7,305.8 M1259.3,272.4 L1294.8,281.6 M1391.1,264.4 L1378.4,276.3 M1457.3,283.2 L1423.3,288.0 M1443.4,321.8 L1415.3,314.0 M1358.8,309.2 L1352.3,321.2 M1316.3,297.3 L1284.2,301.7 M1352.9,287.9 L1358.1,274.5 M1395.9,297.0 L1431.2,294.1 M1309.3,312.8 L1332.5,305.2 M1281.7,287.2 L1321.2,292.7 M1315.5,277.1 L1336.5,287.7 M1404.6,281.9 L1379.8,289.9 M1428.4,306.9 L1391.1,302.1 M1397.7,318.1 L1375.8,307.3 M1358.8,309.2 L1352.9,287.9 M1316.3,297.3 L1395.9,297.0" fill="none" stroke="#021c1e" stroke-width="1.3"/>
<path d="M1726.8,309.5 L1726.1,315.1 L1724.4,320.7 L1721.7,326.3 L1718.0,331.8 L1713.3,337.1 L1707.6,342.4 L1700.9,347.6 L1693.3,352.6 L1684.8,357.4 L1675.4,362.1 L1665.1,366.6 L1653.9,370.9 L1642.0,375.1 L1629.2,379.0 L1615.7,382.7 L1601.5,386.1 L1586.6,389.3 L1571.1,392.3 L1555.0,395.0 L1538.4,397.4 L1521.2,399.6 L1503.6,401.5 L1485.6,403.0 L1467.3,404.4 L1448.6,405.4 L1429.7,406.1 L1410.5,406.5 L1391.3,406.6 L1371.9,406.4 L1352.5,406.0 L1333.1,405.2 L1313.8,404.1 L1294.5,402.8 L1275.5,401.1 L1256.6,399.2 L1238.1,397.0 L1219.8,394.5 L1202.0,391.7 L1184.5,388.7 L1167.6,385.4 L1151.1,381.9 L1135.2,378.2 L1119.9,374.3 L1105.3,370.1 L1091.3,365.7 L1078.1,361.2 L1065.6,356.4 L1054.0,351.6 L1043.1,346.5 L1033.1,341.4 L1024.0,336.1 L1015.8,330.7 L1008.6,325.2 L1002.3,319.6 L996.9,314.0 L992.6,308.3 L989.2,302.6 L986.9,296.9 L985.5,291.2 L985.2,285.5 L985.9,279.9 L987.6,274.3 L990.3,268.7 L994.0,263.2 L998.7,257.9 L1004.4,252.6 L1011.1,247.4 L1018.7,242.4 L1027.2,237.6 L1036.6,232.9 L1046.9,228.4 L1058.1,224.1 L1070.0,219.9 L1082.8,216.0 L1096.3,212.3 L1110.5,208.9 L1125.4,205.7 L1140.9,202.7 L1157.0,200.0 L1173.6,197.6 L1190.8,195.4 L1208.4,193.5 L1226.4,192.0 L1244.7,190.6 L1263.4,189.6 L1282.3,188.9 L1301.5,188.5 L1320.7,188.4 L1340.1,188.6 L1359.5,189.0 L1378.9,189.8 L1398.2,190.9 L1417.5,192.2 L1436.5,193.9 L1455.4,195.8 L1473.9,198.0 L1492.2,200.5 L1510.0,203.3 L1527.5,206.3 L1544.4,209.6 L1560.9,213.1 L1576.8,216.8 L1592.1,220.7 L1606.7,224.9 L1620.7,229.3 L1633.9,233.8 L1646.4,238.6 L1658.0,243.4 L1668.9,248.5 L1678.9,253.6 L1688.0,258.9 L1696.2,264.3 L1703.4,269.8 L1709.7,275.4 L1715.1,281.0 L1719.4,286.7 L1722.8,292.4 L1725.1,298.1 L1726.5,303.8 Z" fill="none" stroke="#fa0f0f" stroke-width="2.8"/>
<path d="M1564.7,518.9 L1564.2,523.2 L1563.2,527.4 L1561.5,531.6 L1559.2,535.8 L1556.4,539.9 L1552.9,543.8 L1548.9,547.7 L1544.4,551.5 L1539.3,555.2 L1533.7,558.7 L1527.6,562.1 L1521.0,565.4 L1513.9,568.5 L1506.3,571.4 L1498.3,574.2 L1489.9,576.8 L1481.1,579.2 L1472.0,581.4 L1462.5,583.4 L1452.6,585.2 L1442.5,586.8 L1432.1,588.2 L1421.5,589.4 L1410.7,590.3 L1399.7,591.1 L1388.6,591.6 L1377.4,591.8 L1366.0,591.9 L1354.7,591.7 L1343.3,591.3 L1331.9,590.7 L1320.5,589.8 L1309.2,588.7 L1298.1,587.5 L1287.0,585.9 L1276.2,584.2 L1265.5,582.3 L1255.0,580.2 L1244.8,577.8 L1234.9,575.3 L1225.3,572.6 L1216.0,569.8 L1207.1,566.7 L1198.5,563.5 L1190.4,560.2 L1182.7,556.7 L1175.4,553.1 L1168.7,549.4 L1162.4,545.5 L1156.6,541.6 L1151.3,537.6 L1146.6,533.4 L1142.4,529.3 L1138.8,525.0 L1135.7,520.8 L1133.2,516.4 L1131.4,512.1 L1130.1,507.8 L1129.4,503.4 L1129.3,499.1 L1129.8,494.8 L1130.8,490.6 L1132.5,486.4 L1134.8,482.2 L1137.6,478.1 L1141.1,474.2 L1145.1,470.3 L1149.6,466.5 L1154.7,462.8 L1160.3,459.3 L1166.4,455.9 L1173.0,452.6 L1180.1,449.5 L1187.7,446.6 L1195.7,443.8 L1204.1,441.2 L1212.9,438.8 L1222.0,436.6 L1231.5,434.6 L1241.4,432.8 L1251.5,431.2 L1261.9,429.8 L1272.5,428.6 L1283.3,427.7 L1294.3,426.9 L1305.4,426.4 L1316.6,426.2 L1328.0,426.1 L1339.3,426.3 L1350.7,426.7 L1362.1,427.3 L1373.5,428.2 L1384.8,429.3 L1395.9,430.5 L1407.0,432.1 L1417.8,433.8 L1428.5,435.7 L1439.0,437.8 L1449.2,440.2 L1459.1,442.7 L1468.7,445.4 L1478.0,448.2 L1486.9,451.3 L1495.5,454.5 L1503.6,457.8 L1511.3,461.3 L1518.6,464.9 L1525.3,468.6 L1531.6,472.5 L1537.4,476.4 L1542.7,480.4 L1547.4,484.6 L1551.6,488.7 L1555.2,493.0 L1558.3,497.2 L1560.8,501.6 L1562.6,505.9 L1563.9,510.2 L1564.6,514.6 Z" fill="none" stroke="#fa0f0f" stroke-width="2.8"/>
<g stroke="#d8d0f4" stroke-width="2" stroke-linejoin="round"><path d="M1646,147 L1612,160 Q1618,113 1647,96 Z" fill="#114e5c"/><path d="M1646,147 L1687,160 Q1682,113 1647,96 Z" fill="#23808e"/><path d="M1602.5,188.5 L1640,173.5 L1684.5,189.5 Q1680,203 1644,202.5 Q1606,202 1602.5,188.5 Z" fill="#124858"/><path d="M1647.8,84 L1646,147 L1643.5,180" fill="none"/></g>
<circle cx="1647.8" cy="82.4" r="4.3" fill="#dcd4f8"/>
<rect x="1637" y="181.2" width="13.8" height="13.8" fill="#d8101a"/>
<text x="1648.7" y="71" font-size="14" fill="#d8c830" text-anchor="middle">Y</text>
<text x="1601" y="167" font-size="14" fill="#d8c830" text-anchor="middle">Z</text>
<text x="1697" y="168" font-size="14" fill="#d8c830" text-anchor="middle">X</text>
<rect x="0" y="40" width="7" height="664" fill="#f4f4f4" stroke="none" stroke-width="1" rx="0" />
<rect x="0" y="40" width="7" height="6" fill="#dadada" stroke="none" stroke-width="1" rx="0" />
<line x1="0" y1="45" x2="7" y2="45" stroke="#b0b0b0" stroke-width="1"/>
<line x1="0" y1="64.5" x2="7" y2="64.5" stroke="#c8c8c8" stroke-width="1"/>
<line x1="0" y1="78.5" x2="7" y2="78.5" stroke="#c8c8c8" stroke-width="1"/>
<svg x="0" y="40" width="6.5" height="664" viewBox="0 40 6.5 664" overflow="hidden">
<text x="-9" y="65" font-size="14.6" fill="#222">ns</text>
<text x="-1" y="144" font-size="14.6" fill="#222">s</text>
<text x="-9" y="169" font-size="14.6" fill="#222">er</text>
<text x="-9" y="192" font-size="14.6" fill="#222">or</text>
<text x="-1" y="216" font-size="14.6" fill="#222">o</text>
<text x="-9" y="237" font-size="14.6" fill="#222">le</text>
<text x="-1" y="260" font-size="14.6" fill="#222">m</text>
<text x="-1" y="281" font-size="14.6" fill="#222">s</text>
<text x="-1" y="310" font-size="14.6" fill="#222">(</text>
<text x="-9" y="335" font-size="14.6" fill="#222">or</text>
<text x="-17" y="358" font-size="14.6" fill="#222">e l</text>
<text x="-1" y="380" font-size="14.6" fill="#222">A</text>
<text x="-1" y="405" font-size="14.6" fill="#222">a</text>
<text x="-1" y="431" font-size="14.6" fill="#222">a</text>
<text x="-9" y="455" font-size="14.6" fill="#222">ca</text>
<text x="-9" y="479" font-size="14.6" fill="#222">ca</text>
<text x="-9" y="502" font-size="14.6" fill="#222">ca</text>
<text x="-9" y="526" font-size="14.6" fill="#222">st</text>
<text x="-1" y="550" font-size="14.6" fill="#222">n</text>
<text x="-1" y="574" font-size="14.6" fill="#222">s</text>
<text x="-9" y="598" font-size="14.6" fill="#222">li</text>
<text x="-9" y="622" font-size="14.6" fill="#222">ls</text>
<text x="-9" y="646" font-size="14.6" fill="#222">(2</text>
<text x="-1" y="670" font-size="14.6" fill="#222">e</text>
<text x="-1" y="694" font-size="14.6" fill="#222">e</text>
</svg>
<line x1="6.5" y1="40" x2="6.5" y2="704" stroke="#d0d0d0" stroke-width="1"/>
<rect x="7.5" y="30.5" width="859" height="673" fill="url(#dlg)" stroke="#8c8c8c" stroke-width="1" rx="0" />
<rect x="8" y="31" width="858" height="38" fill="#ffffff" stroke="none" stroke-width="1" rx="0" />
<linearGradient id="ic" x1="0" y1="0" x2="1" y2="0"><stop offset="0" stop-color="#4a4a90"/><stop offset="0.5" stop-color="#a8a8c8"/><stop offset="1" stop-color="#4a4a90"/></linearGradient>
<path d="M25,40 H31.5 V42.8 L36.5,46.5 V48 H19 V46.5 L25,42.8 Z" fill="url(#ic)"/>
<path d="M19,49.8 H36.8 V51.5 L31.5,55 V58 H25 V55 L19,51.5 Z" fill="url(#ic)"/>
<text x="43.5" y="54.8" font-size="15.0" fill="#8a8a8a" font-weight="normal" textLength="87.5" lengthAdjust="spacingAndGlyphs" >Element Type</text>
<path d="M839.5,44 L851,55.5 M851,44 L839.5,55.5" stroke="#777" stroke-width="1.2"/>
<path d="M27.4,89.7 H18.9 V154.1 H206.3 V89.7 H141.4" fill="none" stroke="#dcdcdc" stroke-width="1"/>
<text x="33.4" y="97.0" font-size="15.0" fill="#111" font-weight="normal" textLength="102.0" lengthAdjust="spacingAndGlyphs" >Element Library</text>
<circle cx="41" cy="124.2" r="7.1" fill="#fff" stroke="#555" stroke-width="1.1"/>
<text x="55" y="130.6" font-size="15.0" fill="#111" font-weight="normal" textLength="57.0" lengthAdjust="spacingAndGlyphs" >Standard</text>
<circle cx="131" cy="124.2" r="7.1" fill="#fff" stroke="#555" stroke-width="1.1"/>
<circle cx="131" cy="124.2" r="4.0" fill="#2a2a2a"/>
<text x="144.4" y="130.6" font-size="15.0" fill="#111" font-weight="normal" textLength="47.4" lengthAdjust="spacingAndGlyphs" >Explicit</text>
<path d="M221,89.9 H212.9 V215.1 H855.0 V89.9 H276.4" fill="none" stroke="#dcdcdc" stroke-width="1"/>
<text x="227" y="96.6" font-size="15.0" fill="#111" font-weight="normal" textLength="43.4" lengthAdjust="spacingAndGlyphs" >Family</text>
<rect x="219.5" y="108.5" width="629" height="101" fill="#fff" stroke="#a8a8a8" stroke-width="1" rx="0" />
<rect x="221" y="110" width="604" height="23.6" fill="#0078d7" stroke="none" stroke-width="1" rx="0" />
<text x="226" y="128.6" font-size="15.0" fill="#fff" font-weight="normal" textLength="57.0" lengthAdjust="spacingAndGlyphs" >3D Stress</text>
<text x="226" y="152.2" font-size="15.0" fill="#111" font-weight="normal" textLength="56.0" lengthAdjust="spacingAndGlyphs" >Acoustic</text>
<text x="226" y="175.6" font-size="15.0" fill="#111" font-weight="normal" textLength="59.0" lengthAdjust="spacingAndGlyphs" >Cohesive</text>
<text x="226" y="199.2" font-size="15.0" fill="#111" font-weight="normal" textLength="110.0" lengthAdjust="spacingAndGlyphs" >Continuum Shell</text>
<rect x="826" y="110" width="21" height="98" fill="#f0f0f0" stroke="none" stroke-width="1" rx="0" />
<rect x="827" y="131.7" width="18" height="44.3" fill="#cdcdcd" stroke="none" stroke-width="1" rx="0" />
<path d="M831,125 L836,120 L841,125" fill="none" stroke="#606060" stroke-width="1.6"/>
<path d="M831,195 L836,200 L841,195" fill="none" stroke="#606060" stroke-width="1.6"/>
<path d="M27.799999999999997,172.9 H18.8 V221.8 H194.5 V172.9 H149" fill="none" stroke="#dcdcdc" stroke-width="1"/>
<text x="33.8" y="179.2" font-size="15.0" fill="#111" font-weight="normal" textLength="109.2" lengthAdjust="spacingAndGlyphs" >Geometric Order</text>
<circle cx="36.1" cy="201.8" r="7.1" fill="#fff" stroke="#555" stroke-width="1.1"/>
<circle cx="36.1" cy="201.8" r="4.0" fill="#2a2a2a"/>
<text x="49.7" y="208.2" font-size="15.0" fill="#111" font-weight="normal" textLength="39.2" lengthAdjust="spacingAndGlyphs" >Linear</text>
<circle cx="107.3" cy="201.8" r="7.1" fill="#fff" stroke="#555" stroke-width="1.1"/>
<text x="121.2" y="208.2" font-size="15.0" fill="#111" font-weight="normal" textLength="63.5" lengthAdjust="spacingAndGlyphs" >Quadratic</text>
<rect x="28.5" y="268" width="815" height="325" fill="#ffffff" stroke="#d9d9d9" stroke-width="1" rx="0" />
<rect x="77.7" y="242" width="64.8" height="26" fill="#f0f0f0" stroke="#d9d9d9" stroke-width="1" rx="0" />
<rect x="142.5" y="242" width="40.2" height="26" fill="#f0f0f0" stroke="#d9d9d9" stroke-width="1" rx="0" />
<rect x="28.5" y="239.5" width="49.2" height="29.5" fill="#ffffff" stroke="#d9d9d9" stroke-width="1" rx="0" />
<rect x="29" y="267" width="48" height="3" fill="#ffffff" stroke="none" stroke-width="1" rx="0" />
<text x="40" y="261.0" font-size="15.0" fill="#111" font-weight="normal" textLength="24.7" lengthAdjust="spacingAndGlyphs" >Hex</text>
<text x="87" y="260.6" font-size="15.0" fill="#111" font-weight="normal" textLength="45.2" lengthAdjust="spacingAndGlyphs" >Wedge</text>
<text x="153" y="260.6" font-size="15.0" fill="#111" font-weight="normal" textLength="20.0" lengthAdjust="spacingAndGlyphs" >Tet</text>
<rect x="43.5" y="284.5" width="15.5" height="15.5" fill="#fff" stroke="#333" stroke-width="1.2" rx="0" />
<path d="M46,292 L50,296.5 L57,287.5" fill="none" stroke="#333" stroke-width="1.4"/>
<text x="64.5" y="298.4" font-size="15.0" fill="#111" font-weight="normal" textLength="132.6" lengthAdjust="spacingAndGlyphs" >Reduced integration</text>
<rect x="208" y="284.5" width="15.5" height="15.5" fill="#fff" stroke="#333" stroke-width="1.2" rx="0" />
<text x="229.2" y="298.4" font-size="15.0" fill="#111" font-weight="normal" textLength="135.3" lengthAdjust="spacingAndGlyphs" >Incompatible modes</text>
<path d="M45,325.1 H37.2 V528.1 H837.5 V325.1 H168.9" fill="none" stroke="#dcdcdc" stroke-width="1"/>
<text x="51" y="332.2" font-size="15.0" fill="#111" font-weight="normal" textLength="111.9" lengthAdjust="spacingAndGlyphs" >Element Controls</text>
<rect x="43.5" y="343.5" width="788" height="178" fill="#fff" stroke="#a8a8a8" stroke-width="1" rx="0" />
<rect x="810" y="344" width="21" height="177" fill="#f0f0f0" stroke="none" stroke-width="1" rx="0" />
<rect x="811" y="424" width="17.6" height="65.4" fill="#cdcdcd" stroke="none" stroke-width="1" rx="0" />
<path d="M815,360 L820,355 L825,360" fill="none" stroke="#606060" stroke-width="1.6"/>
<path d="M815,508 L820,513 L825,508" fill="none" stroke="#606060" stroke-width="1.6"/>
<svg x="44" y="344" width="766" height="177" viewBox="44 344 766 177" overflow="hidden">
<text x="539.4" y="363.1" font-size="15.0" fill="#a0a0a0" font-weight="normal" textLength="204.3" lengthAdjust="spacingAndGlyphs" >Stiffness-viscous weight factor:</text>
<rect x="749.3" y="343.8" width="46.7" height="27.2" fill="#aecbeb" stroke="#a0b0c0" stroke-width="1" rx="0" />
<text x="754" y="363.1" font-size="15.0" fill="#111" font-weight="normal" textLength="18.6" lengthAdjust="spacingAndGlyphs" >0.5</text>
<text x="52.1" y="394.3" font-size="15.0" fill="#111" font-weight="normal" textLength="154.0" lengthAdjust="spacingAndGlyphs" >Conversion to particles:</text>
<circle cx="225.8" cy="388.7" r="7.1" fill="#fff" stroke="#555" stroke-width="1.1"/>
<text x="240" y="394.3" font-size="15.0" fill="#111" font-weight="normal" textLength="72.7" lengthAdjust="spacingAndGlyphs" >Use default</text>
<circle cx="330.7" cy="388.7" r="7.1" fill="#fff" stroke="#555" stroke-width="1.1"/>
<circle cx="330.7" cy="388.7" r="4.0" fill="#2a2a2a"/>
<text x="344.8" y="394.3" font-size="15.0" fill="#111" font-weight="normal" textLength="20.7" lengthAdjust="spacingAndGlyphs" >Yes</text>
<circle cx="384.7" cy="388.7" r="7.1" fill="#fff" stroke="#555" stroke-width="1.1"/>
<text x="398" y="394.3" font-size="15.0" fill="#111" font-weight="normal" textLength="19.0" lengthAdjust="spacingAndGlyphs" >No</text>
<text x="243.5" y="432.1" font-size="15.0" fill="#111" font-weight="normal" textLength="60.0" lengthAdjust="spacingAndGlyphs" >Criterion:</text>
<rect x="309.9" y="410.7" width="67.30000000000001" height="29.80000000000001" fill="#fff" stroke="#adadad" stroke-width="1" rx="0" />
<rect x="363.2" y="412.2" width="13" height="26.80000000000001" fill="#dedede" stroke="#c4c4c4" stroke-width="1" rx="0" />
<path d="M364.7,423.1 L369.7,428.1 L374.7,423.1" fill="none" stroke="#6a6a6a" stroke-width="1.2"/>
<text x="314" y="432.1" font-size="15.0" fill="#111" font-weight="normal" textLength="31.8" lengthAdjust="spacingAndGlyphs" >Time</text>
<text x="399" y="432.0" font-size="15.0" fill="#111" font-weight="normal" textLength="68.4" lengthAdjust="spacingAndGlyphs" >Threshold:</text>
<rect x="473.5" y="410.5" width="54" height="28" fill="#fff" stroke="#7a7a7a" stroke-width="1" rx="0" />
<text x="478.6" y="432.0" font-size="15.0" fill="#111" font-weight="normal" textLength="7.4" lengthAdjust="spacingAndGlyphs" >0</text>
<text x="549.2" y="432.0" font-size="15.0" fill="#111" font-weight="normal" textLength="30.8" lengthAdjust="spacingAndGlyphs" >PPD:</text>
<rect x="586.1" y="410.7" width="37.0" height="29.80000000000001" fill="#fff" stroke="#adadad" stroke-width="1" rx="0" />
<rect x="609.1" y="412.2" width="13" height="26.80000000000001" fill="#dedede" stroke="#c4c4c4" stroke-width="1" rx="0" />
<path d="M610.6,423.1 L615.6,428.1 L620.6,423.1" fill="none" stroke="#6a6a6a" stroke-width="1.2"/>
<text x="591" y="432.0" font-size="15.0" fill="#111" font-weight="normal" textLength="7.0" lengthAdjust="spacingAndGlyphs" >1</text>
<text x="645.8" y="432.0" font-size="15.0" fill="#111" font-weight="normal" textLength="43.9" lengthAdjust="spacingAndGlyphs" >Kernel:</text>
<rect x="695.8" y="410.7" width="95.0" height="29.80000000000001" fill="#fff" stroke="#adadad" stroke-width="1" rx="0" />
<rect x="776.8" y="412.2" width="13" height="26.80000000000001" fill="#dedede" stroke="#c4c4c4" stroke-width="1" rx="0" />
<path d="M778.3,423.1 L783.3,428.1 L788.3,423.1" fill="none" stroke="#6a6a6a" stroke-width="1.2"/>
<text x="701" y="432.0" font-size="15.0" fill="#111" font-weight="normal" textLength="37.0" lengthAdjust="spacingAndGlyphs" >Cubic</text>
<text x="52" y="469.1" font-size="15.0" fill="#111" font-weight="normal" textLength="114.2" lengthAdjust="spacingAndGlyphs" >Element deletion:</text>
<circle cx="225.8" cy="463.4" r="7.1" fill="#fff" stroke="#c4c4c4" stroke-width="1.1"/>
<circle cx="225.8" cy="463.4" r="4.0" fill="#c8c8c8"/>
<text x="240" y="469.1" font-size="15.0" fill="#b4b4b4" font-weight="normal" textLength="72.7" lengthAdjust="spacingAndGlyphs" >Use default</text>
<circle cx="330.7" cy="463.4" r="7.1" fill="#fff" stroke="#c4c4c4" stroke-width="1.1"/>
<text x="344.8" y="469.1" font-size="15.0" fill="#b4b4b4" font-weight="normal" textLength="20.7" lengthAdjust="spacingAndGlyphs" >Yes</text>
<circle cx="384.7" cy="463.4" r="7.1" fill="#fff" stroke="#c4c4c4" stroke-width="1.1"/>
<text x="398" y="469.1" font-size="15.0" fill="#b4b4b4" font-weight="normal" textLength="19.0" lengthAdjust="spacingAndGlyphs" >No</text>
<text x="52" y="500.6" font-size="15.0" fill="#111" font-weight="normal" textLength="116.5" lengthAdjust="spacingAndGlyphs" >Max Degradation:</text>
<circle cx="225.8" cy="495" r="7.1" fill="#fff" stroke="#555" stroke-width="1.1"/>
<circle cx="225.8" cy="495" r="4.0" fill="#2a2a2a"/>
<text x="240" y="500.6" font-size="15.0" fill="#111" font-weight="normal" textLength="72.7" lengthAdjust="spacingAndGlyphs" >Use default</text>
<circle cx="330.7" cy="495" r="7.1" fill="#fff" stroke="#555" stroke-width="1.1"/>
<text x="345" y="500.6" font-size="15.0" fill="#111" font-weight="normal" textLength="47.0" lengthAdjust="spacingAndGlyphs" >Specify</text>
<rect x="397.3" y="480.5" width="46.5" height="27.7" fill="#aecbeb" stroke="#a0b0c0" stroke-width="1" rx="0" />
<text x="52" y="530.1" font-size="15.0" fill="#111" font-weight="normal" textLength="98.0" lengthAdjust="spacingAndGlyphs" >Scaling factor:</text>
<rect x="328" y="514" width="32.3" height="20" fill="#aecbeb" stroke="#a0b0c0" stroke-width="1" rx="0" />
<rect x="534.6" y="514" width="32" height="20" fill="#fff" stroke="#8a8a8a" stroke-width="1" rx="0" />
<rect x="741" y="514" width="31.6" height="20" fill="#fff" stroke="#8a8a8a" stroke-width="1" rx="0" />
</svg>
<text x="44.9" y="558.1" font-size="15.0" fill="#222" font-weight="normal" textLength="46.4" lengthAdjust="spacingAndGlyphs" >C3D8R:</text>
<text x="98.8" y="558.1" font-size="15.0" fill="#222" font-weight="normal" textLength="410.7" lengthAdjust="spacingAndGlyphs" >An 8-node linear brick, reduced integration, hourglass control.</text>
<text x="19.9" y="628.3" font-size="15.0" fill="#111" font-weight="bold" textLength="38.1" lengthAdjust="spacingAndGlyphs" >Note:</text>
<text x="69.5" y="628.3" font-size="15.0" fill="#111" font-weight="normal" textLength="264.5" lengthAdjust="spacingAndGlyphs" >To select an element shape for meshing,</text>
<text x="69.5" y="646.6" font-size="15.0" fill="#111" font-weight="normal" textLength="332.2" lengthAdjust="spacingAndGlyphs" >select &quot;Mesh-&gt;Controls&quot; from the main menu bar.</text>
<line x1="13.7" y1="663.5" x2="861" y2="663.5" stroke="#a0a0a0" stroke-width="1"/>
<rect x="114.7" y="671.5" width="74.8" height="26" fill="#e1e1e1" stroke="#adadad" stroke-width="1" rx="0" />
<text x="141.1" y="691.1" font-size="15.0" fill="#111" font-weight="normal" textLength="22.0" lengthAdjust="spacingAndGlyphs" >OK</text>
<rect x="398.3" y="671.5" width="74.89999999999998" height="26" fill="#e1e1e1" stroke="#adadad" stroke-width="1" rx="0" />
<text x="408.25" y="691.1" font-size="15.0" fill="#111" font-weight="normal" textLength="55.0" lengthAdjust="spacingAndGlyphs" >Defaults</text>
<rect x="683.5" y="671.5" width="74.79999999999995" height="26" fill="#e1e1e1" stroke="#adadad" stroke-width="1" rx="0" />
<text x="698.4" y="691.1" font-size="15.0" fill="#111" font-weight="normal" textLength="45.0" lengthAdjust="spacingAndGlyphs" >Cancel</text>
<rect x="115" y="106" width="79.80000000000001" height="39.80000000000001" rx="6" fill="none" stroke="#e8101a" stroke-width="2.2" filter="url(#sh)"/>
<circle cx="168" cy="87" r="26.5" fill="none" stroke="#444" stroke-width="2" filter="url(#sh)"/>
<text x="168" y="97.4" font-size="30" fill="#f5894f" stroke="#f5894f" stroke-width="0.9" text-anchor="middle">1</text>
<rect x="46" y="353.6" width="397" height="58.299999999999955" rx="6" fill="none" stroke="#e8101a" stroke-width="2.2" filter="url(#sh)"/>
<circle cx="331.7" cy="327.1" r="26.5" fill="none" stroke="#444" stroke-width="2" filter="url(#sh)"/>
<text x="331.7" y="337.5" font-size="30" fill="#f5894f" stroke="#f5894f" stroke-width="0.9" text-anchor="middle">2</text>
<rect x="470.2" y="398.4" width="71.09999999999997" height="48.10000000000002" rx="6" fill="none" stroke="#e8101a" stroke-width="2.2" filter="url(#sh)"/>
<circle cx="496.8" cy="371.8" r="26.5" fill="none" stroke="#444" stroke-width="2" filter="url(#sh)"/>
<text x="496.8" y="382.2" font-size="30" fill="#f5894f" stroke="#f5894f" stroke-width="0.9" text-anchor="middle">3</text>
<rect x="0" y="704" width="199.5" height="36.7" fill="#fff" stroke="#a8a8a8" stroke-width="1" rx="0" />
<text x="-2" y="715.2" font-size="15.0" fill="#111" font-weight="normal" textLength="95.0" lengthAdjust="spacingAndGlyphs" >mization Tasks</text>
<rect x="179.3" y="704" width="19" height="14.7" fill="#e8e8e8" stroke="none" stroke-width="1" rx="0" />
<path d="M183.5,706.5 L188,711 L192.5,706.5" fill="none" stroke="#555" stroke-width="1.6"/>
<rect x="0" y="720.3" width="177.7" height="18.7" fill="#f0f0f0" stroke="none" stroke-width="1" rx="0" />
<rect x="0" y="720.3" width="136.8" height="18.7" fill="#cdcdcd" stroke="none" stroke-width="1" rx="0" />
<path d="M165,725.5 L169,729.5 L165,733.5" fill="none" stroke="#555" stroke-width="1.6"/>
<rect x="215.5" y="708" width="22" height="26.7" fill="#e1e1e1" stroke="#adadad" stroke-width="1" rx="0" />
<path d="M219,721 L226,714.5 V718.5 H234 V723.5 H226 V727.5 Z" fill="#000"/>
<rect x="243" y="708" width="22" height="26.7" fill="#e1e1e1" stroke="#adadad" stroke-width="1" rx="0" />
<path d="M248,714 L260,729 M259,714 L248.5,729" stroke="#f00" stroke-width="2"/>
<text x="274.3" y="728.4" font-size="15.0" fill="#111" font-weight="normal" textLength="279.3" lengthAdjust="spacingAndGlyphs" >Set the data using the Element Type dialog</text>
<g fill="none" stroke="#18a0a8" stroke-width="2" stroke-linecap="round" stroke-linejoin="round"><path d="M1669,712 Q1676,709 1677,713 L1671,720.5"/><path d="M1659,736 L1670,722.5 Q1675,727 1667,732 L1662,733.5"/><path d="M1684.5,719 L1673.5,720 L1682,729 L1671.5,731"/></g>
<text x="1692.6" y="732.6" font-size="16.5" fill="#18a0a8" font-style="italic" stroke="#18a0a8" stroke-width="0.25" textLength="106" lengthAdjust="spacingAndGlyphs">SIMULIA</text>
</svg></body></html>
